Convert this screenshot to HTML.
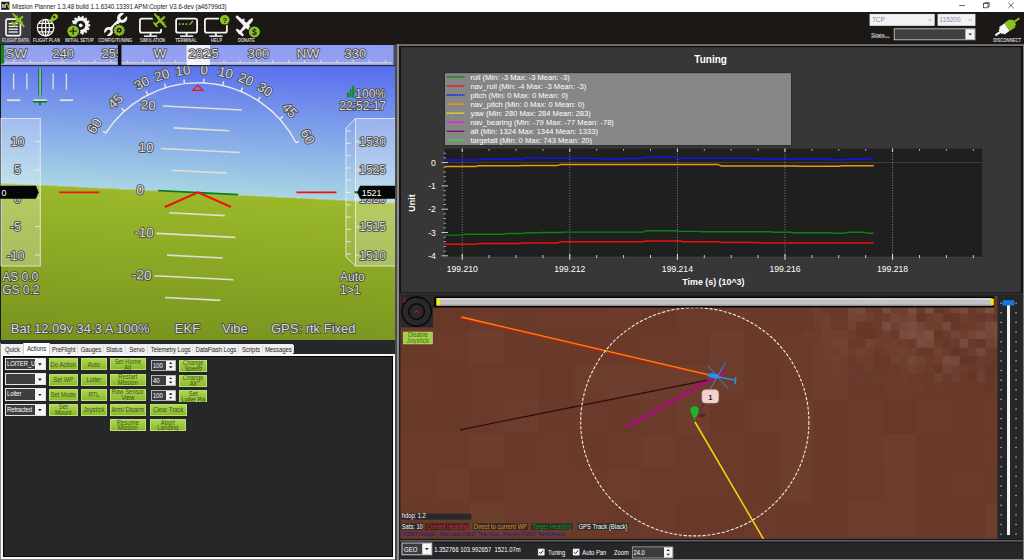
<!DOCTYPE html>
<html lang="en">
<head>
<meta charset="utf-8">
<title>Mission Planner</title>
<style>
*{box-sizing:border-box;margin:0;padding:0}
html,body{width:1024px;height:560px;overflow:hidden;background:#262729;font-family:"Liberation Sans",sans-serif;}
.abs{position:absolute}
#titlebar{left:0;top:0;width:1024px;height:12px;background:#fff;}
#titlebar .t{position:absolute;left:12px;top:1.9px;font-size:7.2px;line-height:9px;color:#151515;white-space:nowrap;display:inline-block;transform-origin:0 0;transform:scaleX(0.85)}
#toolbar{left:0;top:12px;width:1024px;height:32px;background:#1b1816;}
#tbsel{left:0;top:12px;width:31px;height:32px;background:#3b3b3d}
.tbl{position:absolute;top:37.5px;font-size:4.4px;line-height:5px;color:#e8e8e8;font-weight:bold;white-space:nowrap;text-align:center;letter-spacing:-0.1px;text-shadow:0 0 1px #99a}
#hud{left:0;top:44px;width:396px;height:296px;background:#111;overflow:hidden}
#left{left:0;top:340px;width:396px;height:220px;background:#262729}
#split{left:395.1px;top:44px;width:4px;height:516px;z-index:5;background:linear-gradient(90deg,#4a4a4c 0,#4a4a4c 2.4px,#8a8a8a 2.4px,#8a8a8a 4px)}
#chart{left:397px;top:44px;width:627px;height:250px;}
#split2{left:399.1px;top:293.6px;width:1.4px;height:267px;z-index:5;background:#1e2226}
#map{left:399px;top:294px;width:625px;height:266px;}

.tabt{font-size:6.7px;line-height:8px;color:#1c1c1c;text-align:center;white-space:nowrap;letter-spacing:-0.1px;transform:scaleX(0.9)}
.gbtn{background:linear-gradient(#abd753,#8cb92d);border:0.7px solid #bbe070;overflow:hidden;display:flex;align-items:center;justify-content:center;text-align:center;color:#3f5316;font-size:6.7px;line-height:6.2px;white-space:nowrap;letter-spacing:-0.05px}
.gbtn span{display:block;transform:scaleX(0.9)}
.gbtn.two{padding-top:0.9px}
.combo{background:#3d3d3f;border:0.8px solid #e4e4e4;color:#fff;font-size:6.6px;line-height:10.4px;overflow:hidden;white-space:nowrap}
.combo .ct{position:absolute;left:1.2px;top:0;letter-spacing:-0.1px;transform-origin:0 0;transform:scaleX(0.9)}
.combo i{position:absolute;right:0;top:0;width:9.4px;height:100%;background:#f6f6f6}
.combo i:after{content:"";position:absolute;left:2.8px;top:4.3px;width:3.8px;height:2.4px;background:#1a1a1a;clip-path:polygon(0 0,100% 0,50% 100%)}
.spin{background:#3d3d3f;border:0.7px solid #b8b8b8;color:#fff;font-size:6.6px;line-height:9.4px;overflow:hidden;white-space:nowrap}
.spin .ct{position:absolute;left:0.8px;top:0;letter-spacing:-0.1px;transform-origin:0 0;transform:scaleX(0.9)}
.spin i{position:absolute;right:0;top:0;width:8.6px;height:100%;background:#f4f4f4}
.spin i:before{content:"";position:absolute;left:2.5px;top:1.5px;width:3.6px;height:2.2px;background:#1a1a1a;clip-path:polygon(50% 0,100% 100%,0 100%)}
.spin i:after{content:"";position:absolute;left:2.5px;top:5.6px;width:3.6px;height:2.2px;background:#1a1a1a;clip-path:polygon(0 0,100% 0,50% 100%)}
</style>
</head>
<body>
<div id="titlebar" class="abs"><span class="t">Mission Planner 1.3.48 build 1.1.6340.13391 APM:Copter V3.6-dev (a46799d3)</span></div>
<div id="toolbar" class="abs"></div>
<div id="tbsel" class="abs"></div>
<!--TOOLBAR-ICONS-->
<svg class="abs" style="left:0;top:0" width="1024" height="45" viewBox="0 0 1024 45" font-family="'Liberation Sans',sans-serif">
<g stroke="#222" stroke-width="0.7" fill="none"><line x1="959.2" y1="5.5" x2="965" y2="5.5"/><rect x="983.6" y="3.6" width="4.4" height="4.2"/><path d="M984.8 3.6 V2.6 H989.2 V6.6 H988"/><path d="M1008.2 2.6 L1013.8 8.2 M1013.8 2.6 L1008.2 8.2"/></g>
<rect x="1.2" y="1.8" width="8.2" height="8" fill="#1a1a1a"/><text x="1.8" y="8" font-size="5.2" font-weight="bold" fill="#e8e8e8">M</text><path d="M5.8 3.2 C7.6 4 8.6 6 8.8 8.2" fill="none" stroke="#7cb82a" stroke-width="1.3"/>
<rect x="6" y="19.2" width="14.4" height="16.4" rx="1.6" fill="none" stroke="#f4f4f4" stroke-width="1.7"/>
<line x1="8.6" y1="23.6" x2="17.8" y2="23.6" stroke="#f4f4f4" stroke-width="1.3"/>
<line x1="8.6" y1="26.4" x2="17.8" y2="26.4" stroke="#f4f4f4" stroke-width="1.3"/>
<line x1="8.6" y1="29.2" x2="17.8" y2="29.2" stroke="#f4f4f4" stroke-width="1.3"/>
<line x1="8.6" y1="32" x2="17.8" y2="32" stroke="#f4f4f4" stroke-width="1.3"/>
<g transform="translate(18.4 20.2) rotate(50) scale(0.98)" fill="#8cc21e"><path d="M0 -6.4 C0.9 -6.4 1.15 -5 1.15 -3.6 L1.15 -1.5 L9.2 -0.9 L9.2 0.7 L1.15 1.3 L0.8 5.2 L3.2 5.6 L3.2 6.9 L0 7.4 L-3.2 6.9 L-3.2 5.6 L-0.8 5.2 L-1.15 1.3 L-9.2 0.7 L-9.2 -0.9 L-1.15 -1.5 L-1.15 -3.6 C-1.15 -5 -0.9 -6.4 0 -6.4 Z"/><rect x="-4.6" y="-2.4" width="1.3" height="3" rx="0.5"/><rect x="3.3" y="-2.4" width="1.3" height="3" rx="0.5"/></g>
<g fill="none" stroke="#f4f4f4" stroke-width="1.25"><circle cx="45.6" cy="27.6" r="8.3"/><ellipse cx="45.6" cy="27.6" rx="3.9" ry="8.3"/><line x1="45.6" y1="19.3" x2="45.6" y2="35.9"/><line x1="37.3" y1="27.6" x2="53.9" y2="27.6"/><path d="M38.6 23.3 H52.6 M38.6 31.9 H52.6"/></g>
<path d="M49.6 22.6 C50 19.5 51.2 17.4 52.4 15.8 A2.9 2.9 0 1 1 56.6 19.2 C55 20.4 52.6 21.4 49.6 22.6 Z" fill="#8cc21e"/><circle cx="54.3" cy="17" r="1.15" fill="#1b1816"/>
<polygon points="88.34 24.33 89.87 24.56 89.87 26.04 88.34 26.27 88.00 27.75 89.28 28.61 88.64 29.95 87.16 29.48 86.22 30.67 87.00 32.01 85.84 32.93 84.71 31.87 83.34 32.53 83.46 34.07 82.02 34.41 81.46 32.96 79.94 32.96 79.38 34.41 77.94 34.07 78.06 32.53 76.69 31.87 75.56 32.93 74.40 32.01 75.18 30.67 74.24 29.48 72.76 29.95 72.12 28.61 73.40 27.75 73.06 26.27 71.53 26.04 71.53 24.56 73.06 24.33 73.40 22.85 72.12 21.99 72.76 20.65 74.24 21.12 75.18 19.93 74.40 18.59 75.56 17.67 76.69 18.73 78.06 18.07 77.94 16.53 79.38 16.19 79.94 17.64 81.46 17.64 82.02 16.19 83.46 16.53 83.34 18.07 84.71 18.73 85.84 17.67 87.00 18.59 86.22 19.93 87.16 21.12 88.64 20.65 89.28 21.99 88.00 22.85" fill="#f4f4f4" stroke="#f4f4f4" stroke-width="0.7" stroke-linejoin="round"/>
<circle cx="80.7" cy="25.3" r="4.6" fill="#1b1816"/>
<circle cx="80.7" cy="25.3" r="1.9" fill="#f4f4f4"/>
<circle cx="73.2" cy="31.2" r="7.2" fill="#1b1816"/>
<circle cx="73.2" cy="31.2" r="5.8" fill="#8cc21e"/>
<path d="M69.6 31.2 H76.8 M73.2 27.6 V34.8" stroke="#1b2a10" stroke-width="1.3"/>
<g transform="translate(115.4 24.7) rotate(-45)"><rect x="-9" y="-1.75" width="18" height="3.5" fill="#f4f4f4"/><circle cx="9.6" cy="0" r="5.1" fill="#f4f4f4"/><circle cx="-9.6" cy="0" r="4.5" fill="#f4f4f4"/><rect x="9.4" y="-1.9" width="7" height="3.8" fill="#1b1816"/><circle cx="9.6" cy="0" r="1.9" fill="#1b1816"/><rect x="-16.4" y="-1.7" width="7" height="3.4" fill="#1b1816"/><circle cx="-9.4" cy="0" r="1.7" fill="#1b1816"/></g>
<circle cx="119.2" cy="30.3" r="6.6" fill="#1b1816"/>
<polygon points="123.65 29.64 124.58 29.79 124.58 30.81 123.65 30.96 123.38 31.96 124.11 32.55 123.60 33.43 122.73 33.10 122.00 33.83 122.33 34.70 121.45 35.21 120.86 34.48 119.86 34.75 119.71 35.68 118.69 35.68 118.54 34.75 117.54 34.48 116.95 35.21 116.07 34.70 116.40 33.83 115.67 33.10 114.80 33.43 114.29 32.55 115.02 31.96 114.75 30.96 113.82 30.81 113.82 29.79 114.75 29.64 115.02 28.64 114.29 28.05 114.80 27.17 115.67 27.50 116.40 26.77 116.07 25.90 116.95 25.39 117.54 26.12 118.54 25.85 118.69 24.92 119.71 24.92 119.86 25.85 120.86 26.12 121.45 25.39 122.33 25.90 122.00 26.77 122.73 27.50 123.60 27.17 124.11 28.05 123.38 28.64" fill="#8cc21e" stroke="#8cc21e" stroke-width="0.7" stroke-linejoin="round"/>
<circle cx="119.2" cy="30.3" r="2.5" fill="#1b1816"/>
<circle cx="119.2" cy="30.3" r="1.0" fill="#8cc21e"/>
<rect x="139.9" y="18.7" width="21.2" height="14" rx="2" fill="none" stroke="#f4f4f4" stroke-width="1.8"/><rect x="149.5" y="33.2" width="2" height="2.6" fill="#f4f4f4"/><rect x="143.9" y="35.4" width="13.2" height="1.5" fill="#f4f4f4"/>
<path d="M150.5 14 L168 14 L168 29 L158 29 Z" fill="#1b1816"/>
<g transform="translate(160.2 20.6) rotate(50) scale(1.0)" fill="#8cc21e"><path d="M0 -6.4 C0.9 -6.4 1.15 -5 1.15 -3.6 L1.15 -1.5 L9.2 -0.9 L9.2 0.7 L1.15 1.3 L0.8 5.2 L3.2 5.6 L3.2 6.9 L0 7.4 L-3.2 6.9 L-3.2 5.6 L-0.8 5.2 L-1.15 1.3 L-9.2 0.7 L-9.2 -0.9 L-1.15 -1.5 L-1.15 -3.6 C-1.15 -5 -0.9 -6.4 0 -6.4 Z"/><rect x="-4.6" y="-2.4" width="1.3" height="3" rx="0.5"/><rect x="3.3" y="-2.4" width="1.3" height="3" rx="0.5"/></g>
<rect x="176.1" y="18.7" width="21.00000000000001" height="14" rx="2" fill="none" stroke="#f4f4f4" stroke-width="1.8"/><rect x="185.6" y="33.2" width="2" height="2.6" fill="#f4f4f4"/><rect x="180.0" y="35.4" width="13.2" height="1.5" fill="#f4f4f4"/>
<g fill="#8cc21e"><rect x="178.8" y="23.2" width="1.7" height="1.7"/><rect x="182.2" y="23.2" width="1.7" height="1.7"/><rect x="185.6" y="23.2" width="1.7" height="1.7"/></g><line x1="189.6" y1="24.8" x2="192.8" y2="21" stroke="#8cc21e" stroke-width="1.3"/>
<rect x="204.9" y="18.7" width="22.00000000000001" height="14" rx="2" fill="none" stroke="#f4f4f4" stroke-width="1.8"/><rect x="214.9" y="33.2" width="2" height="2.6" fill="#f4f4f4"/><rect x="209.3" y="35.4" width="13.2" height="1.5" fill="#f4f4f4"/>
<circle cx="224.7" cy="19.8" r="6" fill="#1b1816"/>
<circle cx="224.7" cy="19.8" r="4.8" fill="#8cc21e"/><text x="224.7" y="22.5" font-size="7.6" font-weight="bold" text-anchor="middle" fill="#1b2a10">?</text>
<g transform="translate(246.2 25.6) rotate(43) scale(1.5)" fill="#f4f4f4"><path d="M0 -6.4 C0.9 -6.4 1.15 -5 1.15 -3.6 L1.15 -1.5 L9.2 -0.9 L9.2 0.7 L1.15 1.3 L0.8 5.2 L3.2 5.6 L3.2 6.9 L0 7.4 L-3.2 6.9 L-3.2 5.6 L-0.8 5.2 L-1.15 1.3 L-9.2 0.7 L-9.2 -0.9 L-1.15 -1.5 L-1.15 -3.6 C-1.15 -5 -0.9 -6.4 0 -6.4 Z"/><rect x="-4.6" y="-2.4" width="1.3" height="3" rx="0.5"/><rect x="3.3" y="-2.4" width="1.3" height="3" rx="0.5"/></g>
<circle cx="254.4" cy="31.9" r="6.6" fill="#1b1816"/>
<circle cx="254.4" cy="31.9" r="5.5" fill="#8cc21e"/><text x="254.4" y="35" font-size="8.4" font-weight="bold" text-anchor="middle" fill="#101a40">$</text>
<text x="15.5" y="41.7" textLength="27" lengthAdjust="spacingAndGlyphs" font-size="4.7" font-weight="bold" fill="#cfcfd8" text-anchor="middle">FLIGHT DATA</text>
<text x="46.5" y="41.7" textLength="27" lengthAdjust="spacingAndGlyphs" font-size="4.7" font-weight="bold" fill="#cfcfd8" text-anchor="middle">FLIGHT PLAN</text>
<text x="79.3" y="41.7" textLength="28.6" lengthAdjust="spacingAndGlyphs" font-size="4.7" font-weight="bold" fill="#cfcfd8" text-anchor="middle">INITIAL SETUP</text>
<text x="115.3" y="41.7" textLength="34" lengthAdjust="spacingAndGlyphs" font-size="4.7" font-weight="bold" fill="#cfcfd8" text-anchor="middle">CONFIG/TUNING</text>
<text x="152.5" y="41.7" textLength="25" lengthAdjust="spacingAndGlyphs" font-size="4.7" font-weight="bold" fill="#cfcfd8" text-anchor="middle">SIMULATION</text>
<text x="186" y="41.7" textLength="21.5" lengthAdjust="spacingAndGlyphs" font-size="4.7" font-weight="bold" fill="#cfcfd8" text-anchor="middle">TERMINAL</text>
<text x="216.5" y="41.7" textLength="11" lengthAdjust="spacingAndGlyphs" font-size="4.7" font-weight="bold" fill="#cfcfd8" text-anchor="middle">HELP</text>
<text x="246.4" y="41.7" textLength="16.8" lengthAdjust="spacingAndGlyphs" font-size="4.7" font-weight="bold" fill="#cfcfd8" text-anchor="middle">DONATE</text>
<text x="1007.2" y="41.7" textLength="28" lengthAdjust="spacingAndGlyphs" font-size="4.7" font-weight="bold" fill="#cfcfd8" text-anchor="middle">DISCONNECT</text>
<rect x="870" y="14.3" width="64.2" height="11" fill="#f1f1f6" stroke="#fafafa" stroke-width="0.8"/><text x="872.2" y="22.3" font-size="6.4" fill="#8a8a92">TCP</text><path d="M928.4 19 L930 20.8 L931.6 19" fill="none" stroke="#888" stroke-width="0.6"/>
<rect x="938" y="14.3" width="37" height="11" fill="#f1f1f6" stroke="#fafafa" stroke-width="0.8"/><text x="939.6" y="22.3" font-size="6.4" fill="#8a8a92">115200</text><path d="M968.6 19 L970.2 20.8 L971.8 19" fill="none" stroke="#888" stroke-width="0.6"/>
<text x="871" y="36.6" font-size="6" fill="#f0f0f0">Stats...</text><line x1="871.2" y1="37.6" x2="890" y2="37.6" stroke="#e8e8e8" stroke-width="0.5"/>
<rect x="894.2" y="28.8" width="80.8" height="11" fill="#404042" stroke="#d8d8d8" stroke-width="0.8"/><rect x="965.4" y="29.2" width="9.2" height="10.2" fill="#f4f4f4"/><path d="M968.4 33.4 H972 L970.2 35.6 Z" fill="#222"/>
<g transform="translate(995.4 35.4) rotate(-35.5)"><rect x="0" y="-1.1" width="7" height="2.2" fill="#f4f4f4"/><path d="M5.8 -2.8 H7.6 V-4.5 H14.4 V4.5 H7.6 V2.8 H5.8 Z" fill="#f4f4f4"/><path d="M14.3 -4.9 H20.6 L22.2 -3.2 H23.4 V3.2 H22.2 L20.6 4.9 H14.3 Z" fill="#8cc21e"/><rect x="23" y="-0.95" width="6.5" height="1.9" fill="#8cc21e"/></g>
</svg>
<!--/TOOLBAR-ICONS-->
<div id="hud" class="abs">
<!--HUD-->
<svg class="abs" style="left:0;top:0" width="396" height="296" viewBox="0 44 396 296" font-family="'Liberation Sans',sans-serif">
<defs>
<linearGradient id="sky" x1="0" y1="0" x2="0" y2="1"><stop offset="0" stop-color="#3642f3"/><stop offset="1" stop-color="#a8d6e4"/></linearGradient>
<linearGradient id="gnd" x1="0" y1="0" x2="0" y2="1"><stop offset="0" stop-color="#9bb92a"/><stop offset="1" stop-color="#66811a"/></linearGradient>
<clipPath id="c255"><rect x="90" y="45" width="28.5" height="20"/></clipPath>
<clipPath id="hudclip"><rect x="1" y="45" width="394.5" height="295"/></clipPath>
</defs>
<rect x="0" y="44" width="396" height="296" fill="#1a1a1a"/>
<g clip-path="url(#hudclip)">
<g transform="rotate(2.9 198.1 192.9)">
<rect x="-100" y="2.9000000000000057" width="600" height="190" fill="url(#sky)"/>
<rect x="-100" y="192.9" width="600" height="230" fill="url(#gnd)"/>
<line x1="-100" y1="192.9" x2="500" y2="192.9" stroke="#d8e0d8" stroke-width="0.9" opacity="0.75"/>
<line x1="170.3" y1="299.1" x2="225.9" y2="299.1" stroke="#deded4" stroke-width="1.6"/>
<line x1="158.5" y1="277.9" x2="237.7" y2="277.9" stroke="#deded4" stroke-width="1.6"/>
<text x="136.3" y="282.3" font-size="13.5" fill="#dadada" stroke="#484848" stroke-width="1.7" paint-order="stroke" stroke-linejoin="round">-20</text>
<line x1="170.3" y1="256.6" x2="225.9" y2="256.6" stroke="#deded4" stroke-width="1.6"/>
<line x1="158.5" y1="235.4" x2="237.7" y2="235.4" stroke="#deded4" stroke-width="1.6"/>
<text x="136.3" y="239.8" font-size="13.5" fill="#dadada" stroke="#484848" stroke-width="1.7" paint-order="stroke" stroke-linejoin="round">-10</text>
<line x1="170.3" y1="214.2" x2="225.9" y2="214.2" stroke="#deded4" stroke-width="1.6"/>
<line x1="170.3" y1="171.7" x2="225.9" y2="171.7" stroke="#deded4" stroke-width="1.6"/>
<line x1="158.5" y1="150.4" x2="237.7" y2="150.4" stroke="#deded4" stroke-width="1.6"/>
<text x="136.3" y="154.8" font-size="13.5" fill="#dadada" stroke="#484848" stroke-width="1.7" paint-order="stroke" stroke-linejoin="round">10</text>
<line x1="170.3" y1="129.2" x2="225.9" y2="129.2" stroke="#deded4" stroke-width="1.6"/>
<line x1="158.5" y1="107.9" x2="237.7" y2="107.9" stroke="#deded4" stroke-width="1.6"/>
<text x="136.3" y="112.3" font-size="13.5" fill="#dadada" stroke="#484848" stroke-width="1.7" paint-order="stroke" stroke-linejoin="round">20</text>
<text x="136.3" y="197.3" font-size="13.5" fill="#dadada" stroke="#484848" stroke-width="1.7" paint-order="stroke" stroke-linejoin="round">0</text>
<line x1="158.1" y1="192.6" x2="238.1" y2="192.6" stroke="#0a7a1a" stroke-width="1.8"/>
<path d="M102.84 137.90 A110 110 0 0 1 293.36 137.90" fill="none" stroke="#ecece6" stroke-width="1.4"/>
<line x1="102.84" y1="137.90" x2="99.98" y2="136.25" stroke="#ecece6" stroke-width="1.4"/>
<text transform="translate(95.30 133.55) rotate(-60)" text-anchor="middle" font-size="13.5" fill="#dadada" stroke="#484848" stroke-width="1.7" paint-order="stroke" stroke-linejoin="round">60</text>
<line x1="120.32" y1="115.12" x2="117.28" y2="112.08" stroke="#ecece6" stroke-width="1.4"/>
<text transform="translate(114.17 108.97) rotate(-45)" text-anchor="middle" font-size="13.5" fill="#dadada" stroke="#484848" stroke-width="1.7" paint-order="stroke" stroke-linejoin="round">45</text>
<line x1="143.10" y1="97.64" x2="140.95" y2="93.91" stroke="#ecece6" stroke-width="1.4"/>
<text transform="translate(138.75 90.10) rotate(-30)" text-anchor="middle" font-size="13.5" fill="#dadada" stroke="#484848" stroke-width="1.7" paint-order="stroke" stroke-linejoin="round">30</text>
<line x1="160.48" y1="89.53" x2="159.01" y2="85.49" stroke="#ecece6" stroke-width="1.4"/>
<text transform="translate(157.50 81.36) rotate(-20)" text-anchor="middle" font-size="13.5" fill="#dadada" stroke="#484848" stroke-width="1.7" paint-order="stroke" stroke-linejoin="round">20</text>
<line x1="179.00" y1="84.57" x2="178.25" y2="80.34" stroke="#ecece6" stroke-width="1.4"/>
<text transform="translate(177.49 76.00) rotate(-10)" text-anchor="middle" font-size="13.5" fill="#dadada" stroke="#484848" stroke-width="1.7" paint-order="stroke" stroke-linejoin="round">10</text>
<line x1="198.10" y1="82.90" x2="198.10" y2="78.60" stroke="#ecece6" stroke-width="1.4"/>
<text transform="translate(198.10 74.20) rotate(0)" text-anchor="middle" font-size="13.5" fill="#dadada" stroke="#484848" stroke-width="1.7" paint-order="stroke" stroke-linejoin="round">0</text>
<line x1="217.20" y1="84.57" x2="217.95" y2="80.34" stroke="#ecece6" stroke-width="1.4"/>
<text transform="translate(218.71 76.00) rotate(10)" text-anchor="middle" font-size="13.5" fill="#dadada" stroke="#484848" stroke-width="1.7" paint-order="stroke" stroke-linejoin="round">10</text>
<line x1="235.72" y1="89.53" x2="237.19" y2="85.49" stroke="#ecece6" stroke-width="1.4"/>
<text transform="translate(238.70 81.36) rotate(20)" text-anchor="middle" font-size="13.5" fill="#dadada" stroke="#484848" stroke-width="1.7" paint-order="stroke" stroke-linejoin="round">20</text>
<line x1="253.10" y1="97.64" x2="255.25" y2="93.91" stroke="#ecece6" stroke-width="1.4"/>
<text transform="translate(257.45 90.10) rotate(30)" text-anchor="middle" font-size="13.5" fill="#dadada" stroke="#484848" stroke-width="1.7" paint-order="stroke" stroke-linejoin="round">30</text>
<line x1="275.88" y1="115.12" x2="278.92" y2="112.08" stroke="#ecece6" stroke-width="1.4"/>
<text transform="translate(282.03 108.97) rotate(45)" text-anchor="middle" font-size="13.5" fill="#dadada" stroke="#484848" stroke-width="1.7" paint-order="stroke" stroke-linejoin="round">45</text>
<line x1="293.36" y1="137.90" x2="296.22" y2="136.25" stroke="#ecece6" stroke-width="1.4"/>
<text transform="translate(300.90 133.55) rotate(60)" text-anchor="middle" font-size="13.5" fill="#dadada" stroke="#484848" stroke-width="1.7" paint-order="stroke" stroke-linejoin="round">60</text>
</g>
</g>
<rect x="1" y="45" width="394.5" height="20" fill="#a9b6f3" opacity="0.72"/>
<rect x="0" y="65" width="396" height="1.2" fill="#2a2a33"/>
<line x1="4" y1="62.9" x2="392" y2="62.9" stroke="#d6d6d0" stroke-width="1.4"/>
<line x1="14.1" y1="60" x2="14.1" y2="63" stroke="#d6d6d0" stroke-width="1.2"/>
<line x1="30.2" y1="60" x2="30.2" y2="63" stroke="#d6d6d0" stroke-width="1.2"/>
<line x1="46.4" y1="60" x2="46.4" y2="63" stroke="#d6d6d0" stroke-width="1.2"/>
<line x1="62.5" y1="60" x2="62.5" y2="63" stroke="#d6d6d0" stroke-width="1.2"/>
<line x1="78.7" y1="60" x2="78.7" y2="63" stroke="#d6d6d0" stroke-width="1.2"/>
<line x1="94.8" y1="60" x2="94.8" y2="63" stroke="#d6d6d0" stroke-width="1.2"/>
<line x1="111.0" y1="60" x2="111.0" y2="63" stroke="#d6d6d0" stroke-width="1.2"/>
<line x1="127.1" y1="60" x2="127.1" y2="63" stroke="#d6d6d0" stroke-width="1.2"/>
<line x1="143.3" y1="60" x2="143.3" y2="63" stroke="#d6d6d0" stroke-width="1.2"/>
<line x1="159.4" y1="60" x2="159.4" y2="63" stroke="#d6d6d0" stroke-width="1.2"/>
<line x1="175.6" y1="60" x2="175.6" y2="63" stroke="#d6d6d0" stroke-width="1.2"/>
<line x1="191.7" y1="60" x2="191.7" y2="63" stroke="#d6d6d0" stroke-width="1.2"/>
<line x1="207.9" y1="60" x2="207.9" y2="63" stroke="#d6d6d0" stroke-width="1.2"/>
<line x1="224.0" y1="60" x2="224.0" y2="63" stroke="#d6d6d0" stroke-width="1.2"/>
<line x1="240.2" y1="60" x2="240.2" y2="63" stroke="#d6d6d0" stroke-width="1.2"/>
<line x1="256.3" y1="60" x2="256.3" y2="63" stroke="#d6d6d0" stroke-width="1.2"/>
<line x1="272.5" y1="60" x2="272.5" y2="63" stroke="#d6d6d0" stroke-width="1.2"/>
<line x1="288.6" y1="60" x2="288.6" y2="63" stroke="#d6d6d0" stroke-width="1.2"/>
<line x1="304.8" y1="60" x2="304.8" y2="63" stroke="#d6d6d0" stroke-width="1.2"/>
<line x1="320.9" y1="60" x2="320.9" y2="63" stroke="#d6d6d0" stroke-width="1.2"/>
<line x1="337.0" y1="60" x2="337.0" y2="63" stroke="#d6d6d0" stroke-width="1.2"/>
<line x1="353.2" y1="60" x2="353.2" y2="63" stroke="#d6d6d0" stroke-width="1.2"/>
<line x1="369.3" y1="60" x2="369.3" y2="63" stroke="#d6d6d0" stroke-width="1.2"/>
<line x1="385.5" y1="60" x2="385.5" y2="63" stroke="#d6d6d0" stroke-width="1.2"/>
<rect x="1" y="45" width="3.2" height="18.5" fill="#0c8a16"/>
<text x="197.2" y="58" font-size="12.8" fill="#dadada" stroke="#454545" stroke-width="1.7" paint-order="stroke" stroke-linejoin="round">285</text>
<rect x="186.6" y="45" width="23.4" height="20" fill="#ffffff" opacity="0.86"/>
<text x="188.6" y="58" font-size="12.8" fill="#dadada" stroke="#454545" stroke-width="1.7" paint-order="stroke" stroke-linejoin="round">282</text>
<text x="5.0" y="58" font-size="13.7" fill="#dadada" stroke="#454545" stroke-width="1.7" paint-order="stroke" stroke-linejoin="round">SW</text>
<text x="52.6" y="58" font-size="12.8" fill="#dadada" stroke="#454545" stroke-width="1.7" paint-order="stroke" stroke-linejoin="round">240</text>
<text x="101.6" y="58" font-size="12.8" clip-path="url(#c255)" fill="#dadada" stroke="#454545" stroke-width="1.7" paint-order="stroke" stroke-linejoin="round">255</text>
<text x="153.6" y="58" font-size="13.7" fill="#dadada" stroke="#454545" stroke-width="1.7" paint-order="stroke" stroke-linejoin="round">W</text>
<text x="247.8" y="58" font-size="12.8" fill="#dadada" stroke="#454545" stroke-width="1.7" paint-order="stroke" stroke-linejoin="round">300</text>
<text x="296.6" y="58" font-size="13.7" fill="#dadada" stroke="#454545" stroke-width="1.7" paint-order="stroke" stroke-linejoin="round">NW</text>
<text x="344.8" y="58" font-size="12.8" fill="#dadada" stroke="#454545" stroke-width="1.7" paint-order="stroke" stroke-linejoin="round">330</text>
<rect x="117.8" y="45" width="3.6" height="20.5" fill="#0c0c0c"/>
<rect x="393.5" y="45" width="2" height="20.5" fill="#333" opacity="0.8"/>
<path d="M197.9 85.2 L192.6 90.4 L203.2 90.4 Z" fill="none" stroke="#f01818" stroke-width="1.2"/>
<path d="M165 207 L198 192.3 L231 207" fill="none" stroke="#f01010" stroke-width="2"/>
<line x1="59.3" y1="192.3" x2="99.2" y2="192.3" stroke="#f01010" stroke-width="1.8"/>
<line x1="296.5" y1="192.3" x2="336.5" y2="192.3" stroke="#f01010" stroke-width="1.8"/>
<line x1="13.6" y1="73.6" x2="13.6" y2="89.6" stroke="#e4e0d0" stroke-width="1.3"/>
<line x1="26.9" y1="73.6" x2="26.9" y2="89.6" stroke="#e4e0d0" stroke-width="1.3"/>
<line x1="53.1" y1="73.6" x2="53.1" y2="89.6" stroke="#e4e0d0" stroke-width="1.3"/>
<line x1="66.4" y1="73.6" x2="66.4" y2="89.6" stroke="#e4e0d0" stroke-width="1.3"/>
<line x1="38.9" y1="68" x2="38.9" y2="95" stroke="#0a7a14" stroke-width="1.2"/><line x1="41.2" y1="68" x2="41.2" y2="95" stroke="#0a7a14" stroke-width="1.2"/><line x1="40.05" y1="68" x2="40.05" y2="95" stroke="#d8e8d0" stroke-width="0.9"/>
<line x1="7" y1="100.2" x2="20.3" y2="100.2" stroke="#ece6d4" stroke-width="1.7"/>
<line x1="33.3" y1="100.2" x2="46.8" y2="100.2" stroke="#ece6d4" stroke-width="1.7"/>
<line x1="60" y1="100.2" x2="73" y2="100.2" stroke="#ece6d4" stroke-width="1.7"/>
<line x1="33" y1="101.7" x2="47" y2="101.7" stroke="#0a7a14" stroke-width="1.5"/><line x1="40" y1="101" x2="40" y2="105.3" stroke="#0a7a14" stroke-width="1.8"/>
<rect x="1" y="118.5" width="39.3" height="147.5" fill="#ffffff" fill-opacity="0.27" stroke="#f0f0f0" stroke-opacity="0.8" stroke-width="1"/>
<line x1="35" y1="141.4" x2="40" y2="141.4" stroke="#eee" stroke-opacity="0.8" stroke-width="1"/>
<text x="17.5" y="145.9" text-anchor="middle" font-size="12.5" fill="#dadada" stroke="#454545" stroke-width="1.7" paint-order="stroke" stroke-linejoin="round">10</text>
<line x1="35" y1="169.8" x2="40" y2="169.8" stroke="#eee" stroke-opacity="0.8" stroke-width="1"/>
<text x="17.5" y="174.3" text-anchor="middle" font-size="12.5" fill="#dadada" stroke="#454545" stroke-width="1.7" paint-order="stroke" stroke-linejoin="round">5</text>
<line x1="35" y1="198.2" x2="40" y2="198.2" stroke="#eee" stroke-opacity="0.8" stroke-width="1"/>
<text x="17.5" y="202.7" text-anchor="middle" font-size="12.5" fill="#dadada" stroke="#454545" stroke-width="1.7" paint-order="stroke" stroke-linejoin="round">0</text>
<line x1="35" y1="226.6" x2="40" y2="226.6" stroke="#eee" stroke-opacity="0.8" stroke-width="1"/>
<text x="15.5" y="231.1" text-anchor="middle" font-size="12.5" fill="#dadada" stroke="#454545" stroke-width="1.7" paint-order="stroke" stroke-linejoin="round">-5</text>
<line x1="35" y1="255" x2="40" y2="255" stroke="#eee" stroke-opacity="0.8" stroke-width="1"/>
<text x="15.5" y="259.5" text-anchor="middle" font-size="12.5" fill="#dadada" stroke="#454545" stroke-width="1.7" paint-order="stroke" stroke-linejoin="round">-10</text>
<path d="M0 185.8 H36 L38.6 192.3 L36 198.8 H0 Z" fill="#050505"/>
<text x="1.6" y="195.5" font-size="8.8" fill="#fff">0</text>
<rect x="355.5" y="118.5" width="40" height="147.5" fill="#ffffff" fill-opacity="0.27" stroke="#f0f0f0" stroke-opacity="0.8" stroke-width="1"/>
<path d="M355.5 118.5 L346 128 V257 L355.5 266" fill="#ffffff" fill-opacity="0.12" stroke="#f0f0f0" stroke-opacity="0.85" stroke-width="1"/>
<line x1="346" y1="131.0" x2="351" y2="131.0" stroke="#f0f0f0" stroke-opacity="0.85" stroke-width="1"/>
<line x1="346" y1="143.3" x2="351" y2="143.3" stroke="#f0f0f0" stroke-opacity="0.85" stroke-width="1"/>
<line x1="346" y1="155.6" x2="351" y2="155.6" stroke="#f0f0f0" stroke-opacity="0.85" stroke-width="1"/>
<line x1="346" y1="167.9" x2="351" y2="167.9" stroke="#f0f0f0" stroke-opacity="0.85" stroke-width="1"/>
<line x1="346" y1="180.2" x2="351" y2="180.2" stroke="#f0f0f0" stroke-opacity="0.85" stroke-width="1"/>
<line x1="346" y1="192.5" x2="351" y2="192.5" stroke="#f0f0f0" stroke-opacity="0.85" stroke-width="1"/>
<line x1="346" y1="204.8" x2="351" y2="204.8" stroke="#f0f0f0" stroke-opacity="0.85" stroke-width="1"/>
<line x1="346" y1="217.1" x2="351" y2="217.1" stroke="#f0f0f0" stroke-opacity="0.85" stroke-width="1"/>
<line x1="346" y1="229.4" x2="351" y2="229.4" stroke="#f0f0f0" stroke-opacity="0.85" stroke-width="1"/>
<line x1="346" y1="241.7" x2="351" y2="241.7" stroke="#f0f0f0" stroke-opacity="0.85" stroke-width="1"/>
<line x1="346" y1="254.0" x2="351" y2="254.0" stroke="#f0f0f0" stroke-opacity="0.85" stroke-width="1"/>
<line x1="355.5" y1="141.6" x2="359" y2="141.6" stroke="#eee" stroke-opacity="0.8" stroke-width="1"/>
<text x="372.6" y="146.0" text-anchor="middle" font-size="12" fill="#dadada" stroke="#454545" stroke-width="1.7" paint-order="stroke" stroke-linejoin="round">1530</text>
<line x1="355.5" y1="169.8" x2="359" y2="169.8" stroke="#eee" stroke-opacity="0.8" stroke-width="1"/>
<text x="372.6" y="174.20000000000002" text-anchor="middle" font-size="12" fill="#dadada" stroke="#454545" stroke-width="1.7" paint-order="stroke" stroke-linejoin="round">1525</text>
<line x1="355.5" y1="198.2" x2="359" y2="198.2" stroke="#eee" stroke-opacity="0.8" stroke-width="1"/>
<text x="372.6" y="202.6" text-anchor="middle" font-size="12" fill="#dadada" stroke="#454545" stroke-width="1.7" paint-order="stroke" stroke-linejoin="round">1520</text>
<line x1="355.5" y1="226.8" x2="359" y2="226.8" stroke="#eee" stroke-opacity="0.8" stroke-width="1"/>
<text x="372.6" y="231.20000000000002" text-anchor="middle" font-size="12" fill="#dadada" stroke="#454545" stroke-width="1.7" paint-order="stroke" stroke-linejoin="round">1515</text>
<line x1="355.5" y1="255.2" x2="359" y2="255.2" stroke="#eee" stroke-opacity="0.8" stroke-width="1"/>
<text x="372.6" y="259.59999999999997" text-anchor="middle" font-size="12" fill="#dadada" stroke="#454545" stroke-width="1.7" paint-order="stroke" stroke-linejoin="round">1510</text>
<line x1="354.5" y1="192.3" x2="358.5" y2="192.3" stroke="#0a8a14" stroke-width="2.2"/>
<path d="M396 185.8 H360 L357.3 192.3 L360 198.8 H396 Z" fill="#050505"/>
<text x="361.8" y="195.5" font-size="8.8" fill="#fff">1521</text>
<rect x="346.8" y="92.6" width="2" height="4.9" fill="#0c8a16"/><rect x="349.5" y="89.4" width="2" height="8.1" fill="#0c8a16"/><rect x="352.2" y="85.8" width="2" height="11.7" fill="#0c8a16"/>
<text x="386" y="98.2" text-anchor="end" font-size="12" fill="#dadada" stroke="#454545" stroke-width="1.7" paint-order="stroke" stroke-linejoin="round">100%</text>
<text x="386" y="109.6" text-anchor="end" font-size="12" fill="#dadada" stroke="#454545" stroke-width="1.7" paint-order="stroke" stroke-linejoin="round">22:52:17</text>
<text x="2.2" y="281" font-size="12" fill="#dadada" stroke="#454545" stroke-width="1.7" paint-order="stroke" stroke-linejoin="round">AS 0.0</text>
<text x="2.2" y="294.3" font-size="12" fill="#dadada" stroke="#454545" stroke-width="1.7" paint-order="stroke" stroke-linejoin="round">GS 0.2</text>
<text x="340" y="281" font-size="12" fill="#dadada" stroke="#454545" stroke-width="1.7" paint-order="stroke" stroke-linejoin="round">Auto</text>
<text x="340" y="294.3" font-size="12" fill="#dadada" stroke="#454545" stroke-width="1.7" paint-order="stroke" stroke-linejoin="round">1&gt;1</text>
<text x="10.8" y="333" font-size="13" fill="#dadada" stroke="#454545" stroke-width="1.7" paint-order="stroke" stroke-linejoin="round">Bat 12.09v 34.3 A 100%</text>
<text x="174.8" y="333" font-size="13" fill="#dadada" stroke="#454545" stroke-width="1.7" paint-order="stroke" stroke-linejoin="round">EKF</text>
<text x="222" y="333" font-size="13" fill="#dadada" stroke="#454545" stroke-width="1.7" paint-order="stroke" stroke-linejoin="round">Vibe</text>
<text x="271" y="333" font-size="13" fill="#dadada" stroke="#454545" stroke-width="1.7" paint-order="stroke" stroke-linejoin="round">GPS: rtk Fixed</text>
</svg>
<!--/HUD-->
</div>
<div id="left" class="abs">
<!--LEFT-->
<div class="abs " style="left:2.0px;top:4.2px;width:291.0px;height:9.6px;background:#efefef;"></div>
<div class="abs " style="left:22.6px;top:4.6px;width:0.7px;height:8.8px;background:#dadada;"></div>
<div class="abs tabt" style="left:2.0px;top:5.8px;width:21.0px;">Quick</div>
<div class="abs " style="left:23.0px;top:3.0px;width:27.0px;height:11.6px;background:#ffffff;border-left:0.6px solid #d0d0d0;border-right:0.6px solid #d0d0d0;"></div>
<div class="abs tabt" style="left:23.0px;top:4.8px;width:27.0px;">Actions</div>
<div class="abs " style="left:77.1px;top:4.6px;width:0.7px;height:8.8px;background:#dadada;"></div>
<div class="abs tabt" style="left:50.0px;top:5.8px;width:27.5px;">PreFlight</div>
<div class="abs " style="left:103.0px;top:4.6px;width:0.7px;height:8.8px;background:#dadada;"></div>
<div class="abs tabt" style="left:77.5px;top:5.8px;width:25.9px;">Gauges</div>
<div class="abs " style="left:125.3px;top:4.6px;width:0.7px;height:8.8px;background:#dadada;"></div>
<div class="abs tabt" style="left:103.4px;top:5.8px;width:22.3px;">Status</div>
<div class="abs " style="left:147.3px;top:4.6px;width:0.7px;height:8.8px;background:#dadada;"></div>
<div class="abs tabt" style="left:125.7px;top:5.8px;width:22.0px;">Servo</div>
<div class="abs " style="left:192.4px;top:4.6px;width:0.7px;height:8.8px;background:#dadada;"></div>
<div class="abs tabt" style="left:147.7px;top:5.8px;width:45.1px;">Telemetry Logs</div>
<div class="abs " style="left:238.1px;top:4.6px;width:0.7px;height:8.8px;background:#dadada;"></div>
<div class="abs tabt" style="left:192.8px;top:5.8px;width:45.7px;">DataFlash Logs</div>
<div class="abs " style="left:262.1px;top:4.6px;width:0.7px;height:8.8px;background:#dadada;"></div>
<div class="abs tabt" style="left:238.5px;top:5.8px;width:24.0px;">Scripts</div>
<div class="abs " style="left:292.6px;top:4.6px;width:0.7px;height:8.8px;background:#dadada;"></div>
<div class="abs tabt" style="left:262.5px;top:5.8px;width:30.5px;">Messages</div>
<div class="abs " style="left:0.8px;top:13.7px;width:394.3px;height:205.0px;border:2px solid #f6f6f6;box-shadow:inset 0 0 0 1.1px #050505;"></div>
<div class="abs " style="left:0.0px;top:3.0px;width:0.8px;height:217.0px;background:#909090;"></div>
<div class="abs " style="left:0.8px;top:3.6px;width:2.0px;height:12.0px;background:#f6f6f6;"></div>
<div class="abs combo" style="left:5.0px;top:18.0px;width:40.6px;height:12.2px;"><span class="ct">LOITER_U</span><i></i></div>
<div class="abs combo" style="left:5.0px;top:33.2px;width:40.6px;height:12.2px;"><span class="ct"></span><i></i></div>
<div class="abs combo" style="left:5.0px;top:48.4px;width:40.6px;height:12.2px;"><span class="ct">Loiter</span><i></i></div>
<div class="abs combo" style="left:5.0px;top:63.6px;width:40.6px;height:12.2px;"><span class="ct">Retracted</span><i></i></div>
<div class="abs gbtn" style="left:48.7px;top:18.4px;width:29.0px;height:12.0px;"></div>
<div class="abs gbtn" style="left:48.7px;top:33.6px;width:29.0px;height:12.0px;"></div>
<div class="abs gbtn" style="left:48.7px;top:48.8px;width:29.0px;height:12.0px;"></div>
<div class="abs gbtn" style="left:48.7px;top:64.0px;width:29.0px;height:12.0px;"></div>
<div class="abs gbtn" style="left:81.1px;top:18.4px;width:25.6px;height:12.0px;"></div>
<div class="abs gbtn" style="left:81.1px;top:33.6px;width:25.6px;height:12.0px;"></div>
<div class="abs gbtn" style="left:81.1px;top:48.8px;width:25.6px;height:12.0px;"></div>
<div class="abs gbtn" style="left:81.1px;top:64.0px;width:25.6px;height:12.0px;"></div>
<div class="abs gbtn" style="left:109.6px;top:18.4px;width:36.4px;height:12.0px;"></div>
<div class="abs gbtn" style="left:109.6px;top:33.6px;width:36.4px;height:12.0px;"></div>
<div class="abs gbtn" style="left:109.6px;top:48.8px;width:36.4px;height:12.0px;"></div>
<div class="abs gbtn" style="left:109.6px;top:64.0px;width:36.4px;height:12.0px;"></div>
<div class="abs gbtn" style="left:109.6px;top:79.2px;width:36.4px;height:12.0px;"></div>
<div class="abs spin" style="left:151.0px;top:19.6px;width:25.0px;height:11.0px;"><span class="ct">100</span><i></i></div>
<div class="abs spin" style="left:151.0px;top:34.8px;width:25.0px;height:11.0px;"><span class="ct">40</span><i></i></div>
<div class="abs spin" style="left:151.0px;top:50.0px;width:25.0px;height:11.0px;"><span class="ct">100</span><i></i></div>
<div class="abs gbtn" style="left:179.4px;top:19.9px;width:27.6px;height:12.0px;"></div>
<div class="abs gbtn" style="left:179.4px;top:35.1px;width:27.6px;height:12.0px;"></div>
<div class="abs gbtn" style="left:179.4px;top:50.3px;width:27.6px;height:12.0px;"></div>
<div class="abs gbtn" style="left:149.5px;top:64.0px;width:37.7px;height:12.0px;"></div>
<div class="abs gbtn" style="left:149.5px;top:79.2px;width:36.5px;height:12.0px;"></div>
<svg class="abs" style="left:0;top:0" width="396" height="220" viewBox="0 340 396 220" font-family="'Liberation Sans',sans-serif" font-size="6.5" fill="#3f5316" text-anchor="middle"><defs><clipPath id="bc0"><rect x="49.0" y="358.7" width="28.4" height="11.4"/></clipPath><clipPath id="bc1"><rect x="49.0" y="373.9" width="28.4" height="11.4"/></clipPath><clipPath id="bc2"><rect x="49.0" y="389.1" width="28.4" height="11.4"/></clipPath><clipPath id="bc3"><rect x="49.0" y="404.3" width="28.4" height="11.4"/></clipPath><clipPath id="bc4"><rect x="81.4" y="358.7" width="25.0" height="11.4"/></clipPath><clipPath id="bc5"><rect x="81.4" y="373.9" width="25.0" height="11.4"/></clipPath><clipPath id="bc6"><rect x="81.4" y="389.1" width="25.0" height="11.4"/></clipPath><clipPath id="bc7"><rect x="81.4" y="404.3" width="25.0" height="11.4"/></clipPath><clipPath id="bc8"><rect x="109.9" y="358.7" width="35.8" height="11.4"/></clipPath><clipPath id="bc9"><rect x="109.9" y="373.9" width="35.8" height="11.4"/></clipPath><clipPath id="bc10"><rect x="109.9" y="389.1" width="35.8" height="11.4"/></clipPath><clipPath id="bc11"><rect x="109.9" y="404.3" width="35.8" height="11.4"/></clipPath><clipPath id="bc12"><rect x="109.9" y="419.5" width="35.8" height="11.4"/></clipPath><clipPath id="bc13"><rect x="179.7" y="360.2" width="27.0" height="11.4"/></clipPath><clipPath id="bc14"><rect x="179.7" y="375.4" width="27.0" height="11.4"/></clipPath><clipPath id="bc15"><rect x="179.7" y="390.6" width="27.0" height="11.4"/></clipPath><clipPath id="bc16"><rect x="149.8" y="404.3" width="37.1" height="11.4"/></clipPath><clipPath id="bc17"><rect x="149.8" y="419.5" width="35.9" height="11.4"/></clipPath></defs><g clip-path="url(#bc0)"><text transform="translate(63.2 366.7) scale(0.91 1)">Do Action</text></g>
<g clip-path="url(#bc1)"><text transform="translate(63.2 381.9) scale(0.91 1)">Set WP</text></g>
<g clip-path="url(#bc2)"><text transform="translate(63.2 397.1) scale(0.91 1)">Set Mode</text></g>
<g clip-path="url(#bc3)"><text transform="translate(63.2 409.3) scale(0.91 1)">Set</text><text transform="translate(63.2 415.2) scale(0.91 1)">Mount</text></g>
<g clip-path="url(#bc4)"><text transform="translate(93.9 366.7) scale(0.91 1)">Auto</text></g>
<g clip-path="url(#bc5)"><text transform="translate(93.9 381.9) scale(0.91 1)">Loiter</text></g>
<g clip-path="url(#bc6)"><text transform="translate(93.9 397.1) scale(0.91 1)">RTL</text></g>
<g clip-path="url(#bc7)"><text transform="translate(93.9 412.3) scale(0.91 1)">Joystick</text></g>
<g clip-path="url(#bc8)"><text transform="translate(127.8 363.7) scale(0.91 1)">Set Home</text><text transform="translate(127.8 369.6) scale(0.91 1)">Alt</text></g>
<g clip-path="url(#bc9)"><text transform="translate(127.8 378.9) scale(0.91 1)">Restart</text><text transform="translate(127.8 384.9) scale(0.91 1)">Mission</text></g>
<g clip-path="url(#bc10)"><text transform="translate(127.8 394.1) scale(0.91 1)">Raw Sensor</text><text transform="translate(127.8 400.1) scale(0.91 1)">View</text></g>
<g clip-path="url(#bc11)"><text transform="translate(127.8 412.3) scale(0.91 1)">Arm/ Disarm</text></g>
<g clip-path="url(#bc12)"><text transform="translate(127.8 424.5) scale(0.91 1)">Resume</text><text transform="translate(127.8 430.4) scale(0.91 1)">Mission</text></g>
<g clip-path="url(#bc13)"><text transform="translate(193.2 365.2) scale(0.91 1)">Change</text><text transform="translate(193.2 371.1) scale(0.91 1)">Speed</text></g>
<g clip-path="url(#bc14)"><text transform="translate(193.2 380.4) scale(0.91 1)">Change</text><text transform="translate(193.2 386.4) scale(0.91 1)">Alt</text></g>
<g clip-path="url(#bc15)"><text transform="translate(193.2 395.6) scale(0.91 1)">Set</text><text transform="translate(193.2 401.6) scale(0.91 1)">Loiter Ra</text></g>
<g clip-path="url(#bc16)"><text transform="translate(168.3 412.3) scale(0.91 1)">Clear Track</text></g>
<g clip-path="url(#bc17)"><text transform="translate(167.8 424.5) scale(0.91 1)">Abort</text><text transform="translate(167.8 430.4) scale(0.91 1)">Landing</text></g></svg>
<!--/LEFT-->
</div>
<div id="split" class="abs"></div>
<div id="split2" class="abs"></div>
<div id="chart" class="abs">
<!--CHART-->
<svg class="abs" style="left:0;top:0" width="627" height="250" viewBox="397 44 627 250" font-family="'Liberation Sans',sans-serif">
<rect x="397" y="44" width="627" height="250" fill="#262729"/>
<rect x="397" y="44" width="0.6" height="250" fill="#444446"/>
<rect x="397.5" y="44.3" width="626.5" height="249.7" fill="#808080"/>
<rect x="399.1" y="45.9" width="623.9" height="247.7" fill="#0c0c0c"/>
<rect x="399.1" y="293.6" width="623.9" height="0.4" fill="#29292b"/>
<rect x="400.9" y="47.4" width="620.5" height="244.9" fill="#303030"/>
<rect x="400.9" y="47.4" width="618.9" height="244.9" fill="#373737"/>
<text x="710.6" y="62.6" font-size="10" font-weight="bold" fill="#fff" text-anchor="middle">Tuning</text>
<rect x="444.6" y="72.8" width="346.8" height="72.6" fill="#868686" stroke="#1c1c1c" stroke-width="0.7"/>
<line x1="446.6" y1="76.9" x2="464.4" y2="76.9" stroke="#0b8a0b" stroke-width="1.3"/>
<text x="470.4" y="79.5" font-size="7.55" fill="#fff">roll (Min: -3 Max: -3 Mean: -3)</text>
<line x1="446.6" y1="86.0" x2="464.4" y2="86.0" stroke="#f01818" stroke-width="1.3"/>
<text x="470.4" y="88.6" font-size="7.55" fill="#fff">nav_roll (Min: -4 Max: -3 Mean: -3)</text>
<line x1="446.6" y1="95.0" x2="464.4" y2="95.0" stroke="#1018e8" stroke-width="1.3" stroke-dasharray="1.2 0.5"/>
<text x="470.4" y="97.6" font-size="7.55" fill="#fff">pitch (Min: 0 Max: 0 Mean: 0)</text>
<line x1="446.6" y1="104.1" x2="464.4" y2="104.1" stroke="#f09808" stroke-width="1.3"/>
<text x="470.4" y="106.7" font-size="7.55" fill="#fff">nav_pitch (Min: 0 Max: 0 Mean: 0)</text>
<line x1="446.6" y1="113.1" x2="464.4" y2="113.1" stroke="#f4f410" stroke-width="1.3" stroke-dasharray="1.8 0.4"/>
<text x="470.4" y="115.7" font-size="7.55" fill="#fff">yaw (Min: 280 Max: 284 Mean: 283)</text>
<line x1="446.6" y1="122.2" x2="464.4" y2="122.2" stroke="#f010f0" stroke-width="1.3"/>
<text x="470.4" y="124.8" font-size="7.55" fill="#fff">nav_bearing (Min: -79 Max: -77 Mean: -78)</text>
<line x1="446.6" y1="131.3" x2="464.4" y2="131.3" stroke="#780a6a" stroke-width="1.3"/>
<text x="470.4" y="133.9" font-size="7.55" fill="#fff">alt (Min: 1324 Max: 1344 Mean: 1333)</text>
<line x1="446.6" y1="140.3" x2="464.4" y2="140.3" stroke="#38d838" stroke-width="1.3"/>
<text x="470.4" y="142.9" font-size="7.55" fill="#fff">targetalt (Min: 0 Max: 743 Mean: 20)</text>
<rect x="444.6" y="148.6" width="537.6" height="108.6" fill="#1f1f1f"/>
<line x1="444.6" y1="162.6" x2="982.2" y2="162.6" stroke="#484848" stroke-width="0.8"/>
<line x1="444.6" y1="257.2" x2="982.2" y2="257.2" stroke="#555" stroke-width="0.6"/>
<line x1="462.2" y1="148.6" x2="462.2" y2="257.2" stroke="#c8c8c8" stroke-width="0.8" stroke-dasharray="1 1.6" opacity="0.8"/>
<line x1="462.2" y1="148.6" x2="462.2" y2="151.79999999999998" stroke="#e8e8e8" stroke-width="1"/>
<line x1="462.2" y1="254.0" x2="462.2" y2="259.8" stroke="#e8e8e8" stroke-width="1"/>
<line x1="569.8" y1="148.6" x2="569.8" y2="257.2" stroke="#c8c8c8" stroke-width="0.8" stroke-dasharray="1 1.6" opacity="0.8"/>
<line x1="569.8" y1="148.6" x2="569.8" y2="151.79999999999998" stroke="#e8e8e8" stroke-width="1"/>
<line x1="569.8" y1="254.0" x2="569.8" y2="259.8" stroke="#e8e8e8" stroke-width="1"/>
<line x1="677.4" y1="148.6" x2="677.4" y2="257.2" stroke="#c8c8c8" stroke-width="0.8" stroke-dasharray="1 1.6" opacity="0.8"/>
<line x1="677.4" y1="148.6" x2="677.4" y2="151.79999999999998" stroke="#e8e8e8" stroke-width="1"/>
<line x1="677.4" y1="254.0" x2="677.4" y2="259.8" stroke="#e8e8e8" stroke-width="1"/>
<line x1="785.0" y1="148.6" x2="785.0" y2="257.2" stroke="#c8c8c8" stroke-width="0.8" stroke-dasharray="1 1.6" opacity="0.8"/>
<line x1="785.0" y1="148.6" x2="785.0" y2="151.79999999999998" stroke="#e8e8e8" stroke-width="1"/>
<line x1="785.0" y1="254.0" x2="785.0" y2="259.8" stroke="#e8e8e8" stroke-width="1"/>
<line x1="892.6" y1="148.6" x2="892.6" y2="257.2" stroke="#c8c8c8" stroke-width="0.8" stroke-dasharray="1 1.6" opacity="0.8"/>
<line x1="892.6" y1="148.6" x2="892.6" y2="151.79999999999998" stroke="#e8e8e8" stroke-width="1"/>
<line x1="892.6" y1="254.0" x2="892.6" y2="259.8" stroke="#e8e8e8" stroke-width="1"/>
<line x1="489.1" y1="149.0" x2="489.1" y2="150.6" stroke="#d8d8d8" stroke-width="0.9"/>
<line x1="489.1" y1="255.0" x2="489.1" y2="258.2" stroke="#d8d8d8" stroke-width="0.9"/>
<line x1="516.0" y1="149.0" x2="516.0" y2="150.6" stroke="#d8d8d8" stroke-width="0.9"/>
<line x1="516.0" y1="255.0" x2="516.0" y2="258.2" stroke="#d8d8d8" stroke-width="0.9"/>
<line x1="542.9" y1="149.0" x2="542.9" y2="150.6" stroke="#d8d8d8" stroke-width="0.9"/>
<line x1="542.9" y1="255.0" x2="542.9" y2="258.2" stroke="#d8d8d8" stroke-width="0.9"/>
<line x1="596.7" y1="149.0" x2="596.7" y2="150.6" stroke="#d8d8d8" stroke-width="0.9"/>
<line x1="596.7" y1="255.0" x2="596.7" y2="258.2" stroke="#d8d8d8" stroke-width="0.9"/>
<line x1="623.6" y1="149.0" x2="623.6" y2="150.6" stroke="#d8d8d8" stroke-width="0.9"/>
<line x1="623.6" y1="255.0" x2="623.6" y2="258.2" stroke="#d8d8d8" stroke-width="0.9"/>
<line x1="650.5" y1="149.0" x2="650.5" y2="150.6" stroke="#d8d8d8" stroke-width="0.9"/>
<line x1="650.5" y1="255.0" x2="650.5" y2="258.2" stroke="#d8d8d8" stroke-width="0.9"/>
<line x1="704.3" y1="149.0" x2="704.3" y2="150.6" stroke="#d8d8d8" stroke-width="0.9"/>
<line x1="704.3" y1="255.0" x2="704.3" y2="258.2" stroke="#d8d8d8" stroke-width="0.9"/>
<line x1="731.2" y1="149.0" x2="731.2" y2="150.6" stroke="#d8d8d8" stroke-width="0.9"/>
<line x1="731.2" y1="255.0" x2="731.2" y2="258.2" stroke="#d8d8d8" stroke-width="0.9"/>
<line x1="758.1" y1="149.0" x2="758.1" y2="150.6" stroke="#d8d8d8" stroke-width="0.9"/>
<line x1="758.1" y1="255.0" x2="758.1" y2="258.2" stroke="#d8d8d8" stroke-width="0.9"/>
<line x1="811.9" y1="149.0" x2="811.9" y2="150.6" stroke="#d8d8d8" stroke-width="0.9"/>
<line x1="811.9" y1="255.0" x2="811.9" y2="258.2" stroke="#d8d8d8" stroke-width="0.9"/>
<line x1="838.8" y1="149.0" x2="838.8" y2="150.6" stroke="#d8d8d8" stroke-width="0.9"/>
<line x1="838.8" y1="255.0" x2="838.8" y2="258.2" stroke="#d8d8d8" stroke-width="0.9"/>
<line x1="865.7" y1="149.0" x2="865.7" y2="150.6" stroke="#d8d8d8" stroke-width="0.9"/>
<line x1="865.7" y1="255.0" x2="865.7" y2="258.2" stroke="#d8d8d8" stroke-width="0.9"/>
<line x1="919.5" y1="149.0" x2="919.5" y2="150.6" stroke="#d8d8d8" stroke-width="0.9"/>
<line x1="919.5" y1="255.0" x2="919.5" y2="258.2" stroke="#d8d8d8" stroke-width="0.9"/>
<line x1="946.4" y1="149.0" x2="946.4" y2="150.6" stroke="#d8d8d8" stroke-width="0.9"/>
<line x1="946.4" y1="255.0" x2="946.4" y2="258.2" stroke="#d8d8d8" stroke-width="0.9"/>
<line x1="973.3" y1="149.0" x2="973.3" y2="150.6" stroke="#d8d8d8" stroke-width="0.9"/>
<line x1="973.3" y1="255.0" x2="973.3" y2="258.2" stroke="#d8d8d8" stroke-width="0.9"/>
<line x1="441.6" y1="162.6" x2="448.0" y2="162.6" stroke="#c8c8c8" stroke-width="1"/>
<text x="435.8" y="165.7" font-size="8.6" fill="#fff" text-anchor="end">0</text>
<line x1="441.6" y1="185.9" x2="448.0" y2="185.9" stroke="#c8c8c8" stroke-width="1"/>
<text x="435.8" y="189.0" font-size="8.6" fill="#fff" text-anchor="end">-1</text>
<line x1="441.6" y1="209.2" x2="448.0" y2="209.2" stroke="#c8c8c8" stroke-width="1"/>
<text x="435.8" y="212.3" font-size="8.6" fill="#fff" text-anchor="end">-2</text>
<line x1="441.6" y1="232.5" x2="448.0" y2="232.5" stroke="#c8c8c8" stroke-width="1"/>
<text x="435.8" y="235.6" font-size="8.6" fill="#fff" text-anchor="end">-3</text>
<line x1="441.6" y1="255.8" x2="448.0" y2="255.8" stroke="#c8c8c8" stroke-width="1"/>
<text x="435.8" y="258.9" font-size="8.6" fill="#fff" text-anchor="end">-4</text>
<line x1="443.40000000000003" y1="153.3" x2="446.0" y2="153.3" stroke="#b8b8b8" stroke-width="0.8"/>
<line x1="443.40000000000003" y1="157.9" x2="446.0" y2="157.9" stroke="#b8b8b8" stroke-width="0.8"/>
<line x1="443.40000000000003" y1="167.3" x2="446.0" y2="167.3" stroke="#b8b8b8" stroke-width="0.8"/>
<line x1="443.40000000000003" y1="171.9" x2="446.0" y2="171.9" stroke="#b8b8b8" stroke-width="0.8"/>
<line x1="443.40000000000003" y1="176.6" x2="446.0" y2="176.6" stroke="#b8b8b8" stroke-width="0.8"/>
<line x1="443.40000000000003" y1="181.2" x2="446.0" y2="181.2" stroke="#b8b8b8" stroke-width="0.8"/>
<line x1="443.40000000000003" y1="190.6" x2="446.0" y2="190.6" stroke="#b8b8b8" stroke-width="0.8"/>
<line x1="443.40000000000003" y1="195.2" x2="446.0" y2="195.2" stroke="#b8b8b8" stroke-width="0.8"/>
<line x1="443.40000000000003" y1="199.9" x2="446.0" y2="199.9" stroke="#b8b8b8" stroke-width="0.8"/>
<line x1="443.40000000000003" y1="204.5" x2="446.0" y2="204.5" stroke="#b8b8b8" stroke-width="0.8"/>
<line x1="443.40000000000003" y1="213.9" x2="446.0" y2="213.9" stroke="#b8b8b8" stroke-width="0.8"/>
<line x1="443.40000000000003" y1="218.5" x2="446.0" y2="218.5" stroke="#b8b8b8" stroke-width="0.8"/>
<line x1="443.40000000000003" y1="223.2" x2="446.0" y2="223.2" stroke="#b8b8b8" stroke-width="0.8"/>
<line x1="443.40000000000003" y1="227.8" x2="446.0" y2="227.8" stroke="#b8b8b8" stroke-width="0.8"/>
<line x1="443.40000000000003" y1="237.2" x2="446.0" y2="237.2" stroke="#b8b8b8" stroke-width="0.8"/>
<line x1="443.40000000000003" y1="241.8" x2="446.0" y2="241.8" stroke="#b8b8b8" stroke-width="0.8"/>
<line x1="443.40000000000003" y1="246.5" x2="446.0" y2="246.5" stroke="#b8b8b8" stroke-width="0.8"/>
<line x1="443.40000000000003" y1="251.1" x2="446.0" y2="251.1" stroke="#b8b8b8" stroke-width="0.8"/>
<text x="462.2" y="271.9" font-size="8.6" fill="#fff" text-anchor="middle">199.210</text>
<text x="569.8" y="271.9" font-size="8.6" fill="#fff" text-anchor="middle">199.212</text>
<text x="677.4" y="271.9" font-size="8.6" fill="#fff" text-anchor="middle">199.214</text>
<text x="785.0" y="271.9" font-size="8.6" fill="#fff" text-anchor="middle">199.216</text>
<text x="892.6" y="271.9" font-size="8.6" fill="#fff" text-anchor="middle">199.218</text>
<text x="713.4" y="285.2" font-size="8.9" font-weight="bold" fill="#fff" text-anchor="middle">Time (s) (10^3)</text>
<text transform="translate(415.2 203) rotate(-90)" font-size="8.9" font-weight="bold" fill="#fff" text-anchor="middle">Unit</text>
<path d="M444.8 235.1 H462.9 L465.9 234.2 H504.0 L507.0 233.5 H523.5 L526.5 232.8 H539.1 L542.1 232.5 H561.5 L564.5 232.1 H643.2 L646.2 230.7 H676.0 L679.0 231.4 H698.3 L701.3 231.8 H770.9 L773.9 232.3 H790.8 L793.8 232.8 H829.5 L832.5 233.2 H844.7 L847.7 232.3 H864.5 L867.5 233.2 H873.7" fill="none" stroke="#0b840b" stroke-width="1.4" stroke-linejoin="round"/>
<path d="M444.8 244.3 H475.5 L478.5 243.6 H519.2 L522.2 243.1 H557.5 L560.5 241.7 H643.2 L646.2 241.0 H680.5 L683.5 241.7 H718.2 L721.2 242.4 H758.0 L761.0 242.9 H873.7" fill="none" stroke="#f01010" stroke-width="1.5" stroke-linejoin="round"/>
<path d="M444.8 160.0 H480.5 L483.5 159.3 H505.1 L508.1 159.0 H522.5 L525.5 157.8 H539.5 L542.5 158.3 H597.5 L600.5 159.0 H618.5 L621.5 158.5 H643.2 L646.2 157.0 H676.0 L679.0 158.2 H753.3 L756.3 158.8 H829.5 L832.5 159.8 H844.5 L847.5 159.3 H865.5 L868.5 158.8 H873.7" fill="none" stroke="#1014e8" stroke-width="1.6" stroke-linejoin="round"/>
<path d="M444.8 166.5 H475.5 L478.5 165.8 H519.2 L522.2 165.4 H557.5 L560.5 164.6 H718.2 L721.2 165.9 H796.5 L799.5 166.3 H838.9 L841.9 165.7 H873.7" fill="none" stroke="#f09a08" stroke-width="1.5" stroke-linejoin="round"/>
</svg>
<!--/CHART-->
</div>
<div id="map" class="abs">
<!--MAP-->
<svg class="abs" style="left:0;top:0" width="625" height="266" viewBox="399 294 625 266" font-family="'Liberation Sans',sans-serif">
<rect x="399" y="294" width="625" height="266" fill="#262729"/>
<clipPath id="mapclip"><rect x="400.5" y="296" width="597.0" height="242.89999999999998"/></clipPath>
<rect x="400.5" y="296" width="597.0" height="242.89999999999998" fill="#6b3a2a"/>
<g clip-path="url(#mapclip)">
<rect x="400.5" y="330.4" width="34.5" height="34.5" fill="#000000" opacity="0.014"/>
<rect x="400.5" y="399.2" width="34.5" height="34.5" fill="#000000" opacity="0.017"/>
<rect x="400.5" y="502.4" width="34.5" height="34.5" fill="#000000" opacity="0.018"/>
<rect x="434.9" y="296.0" width="34.5" height="34.5" fill="#000000" opacity="0.019"/>
<rect x="434.9" y="364.8" width="34.5" height="34.5" fill="#000000" opacity="0.017"/>
<rect x="434.9" y="399.2" width="34.5" height="34.5" fill="#000000" opacity="0.016"/>
<rect x="434.9" y="468.0" width="34.5" height="34.5" fill="#ffffff" opacity="0.013"/>
<rect x="434.9" y="502.4" width="34.5" height="34.5" fill="#000000" opacity="0.015"/>
<rect x="434.9" y="536.8" width="34.5" height="34.5" fill="#000000" opacity="0.011"/>
<rect x="469.3" y="330.4" width="34.5" height="34.5" fill="#ffffff" opacity="0.018"/>
<rect x="469.3" y="433.6" width="34.5" height="34.5" fill="#ffffff" opacity="0.019"/>
<rect x="469.3" y="468.0" width="34.5" height="34.5" fill="#000000" opacity="0.018"/>
<rect x="469.3" y="502.4" width="34.5" height="34.5" fill="#ffffff" opacity="0.014"/>
<rect x="469.3" y="536.8" width="34.5" height="34.5" fill="#000000" opacity="0.008"/>
<rect x="503.7" y="296.0" width="34.5" height="34.5" fill="#000000" opacity="0.014"/>
<rect x="503.7" y="330.4" width="34.5" height="34.5" fill="#000000" opacity="0.015"/>
<rect x="503.7" y="399.2" width="34.5" height="34.5" fill="#ffffff" opacity="0.013"/>
<rect x="503.7" y="433.6" width="34.5" height="34.5" fill="#000000" opacity="0.013"/>
<rect x="538.1" y="330.4" width="34.5" height="34.5" fill="#000000" opacity="0.017"/>
<rect x="538.1" y="364.8" width="34.5" height="34.5" fill="#000000" opacity="0.018"/>
<rect x="538.1" y="399.2" width="34.5" height="34.5" fill="#000000" opacity="0.012"/>
<rect x="572.5" y="330.4" width="34.5" height="34.5" fill="#000000" opacity="0.008"/>
<rect x="572.5" y="364.8" width="34.5" height="34.5" fill="#ffffff" opacity="0.012"/>
<rect x="572.5" y="433.6" width="34.5" height="34.5" fill="#000000" opacity="0.010"/>
<rect x="572.5" y="536.8" width="34.5" height="34.5" fill="#ffffff" opacity="0.015"/>
<rect x="606.9" y="296.0" width="34.5" height="34.5" fill="#ffffff" opacity="0.009"/>
<rect x="606.9" y="330.4" width="34.5" height="34.5" fill="#000000" opacity="0.008"/>
<rect x="606.9" y="364.8" width="34.5" height="34.5" fill="#ffffff" opacity="0.019"/>
<rect x="606.9" y="399.2" width="34.5" height="34.5" fill="#000000" opacity="0.015"/>
<rect x="606.9" y="468.0" width="34.5" height="34.5" fill="#ffffff" opacity="0.010"/>
<rect x="606.9" y="502.4" width="34.5" height="34.5" fill="#000000" opacity="0.014"/>
<rect x="641.3" y="296.0" width="34.5" height="34.5" fill="#000000" opacity="0.018"/>
<rect x="641.3" y="364.8" width="34.5" height="34.5" fill="#ffffff" opacity="0.011"/>
<rect x="641.3" y="433.6" width="34.5" height="34.5" fill="#ffffff" opacity="0.015"/>
<rect x="675.7" y="364.8" width="34.5" height="34.5" fill="#ffffff" opacity="0.014"/>
<rect x="675.7" y="399.2" width="34.5" height="34.5" fill="#ffffff" opacity="0.018"/>
<rect x="675.7" y="502.4" width="34.5" height="34.5" fill="#000000" opacity="0.018"/>
<rect x="675.7" y="536.8" width="34.5" height="34.5" fill="#ffffff" opacity="0.008"/>
<rect x="710.1" y="330.4" width="34.5" height="34.5" fill="#ffffff" opacity="0.020"/>
<rect x="710.1" y="364.8" width="34.5" height="34.5" fill="#ffffff" opacity="0.013"/>
<rect x="710.1" y="399.2" width="34.5" height="34.5" fill="#000000" opacity="0.009"/>
<rect x="710.1" y="502.4" width="34.5" height="34.5" fill="#000000" opacity="0.019"/>
<rect x="744.5" y="296.0" width="34.5" height="34.5" fill="#000000" opacity="0.013"/>
<rect x="744.5" y="330.4" width="34.5" height="34.5" fill="#000000" opacity="0.015"/>
<rect x="744.5" y="364.8" width="34.5" height="34.5" fill="#000000" opacity="0.018"/>
<rect x="744.5" y="399.2" width="34.5" height="34.5" fill="#ffffff" opacity="0.011"/>
<rect x="744.5" y="433.6" width="34.5" height="34.5" fill="#000000" opacity="0.015"/>
<rect x="744.5" y="468.0" width="34.5" height="34.5" fill="#000000" opacity="0.010"/>
<rect x="744.5" y="536.8" width="34.5" height="34.5" fill="#ffffff" opacity="0.015"/>
<rect x="778.9" y="296.0" width="34.5" height="34.5" fill="#000000" opacity="0.017"/>
<rect x="778.9" y="399.2" width="34.5" height="34.5" fill="#ffffff" opacity="0.015"/>
<rect x="778.9" y="433.6" width="34.5" height="34.5" fill="#ffffff" opacity="0.013"/>
<rect x="778.9" y="468.0" width="34.5" height="34.5" fill="#ffffff" opacity="0.015"/>
<rect x="778.9" y="502.4" width="34.5" height="34.5" fill="#000000" opacity="0.009"/>
<rect x="813.3" y="330.4" width="34.5" height="34.5" fill="#ffffff" opacity="0.015"/>
<rect x="813.3" y="364.8" width="34.5" height="34.5" fill="#ffffff" opacity="0.018"/>
<rect x="813.3" y="399.2" width="34.5" height="34.5" fill="#000000" opacity="0.014"/>
<rect x="813.3" y="433.6" width="34.5" height="34.5" fill="#000000" opacity="0.013"/>
<rect x="813.3" y="468.0" width="34.5" height="34.5" fill="#000000" opacity="0.011"/>
<rect x="813.3" y="502.4" width="34.5" height="34.5" fill="#000000" opacity="0.011"/>
<rect x="847.7" y="330.4" width="34.5" height="34.5" fill="#000000" opacity="0.009"/>
<rect x="847.7" y="364.8" width="34.5" height="34.5" fill="#000000" opacity="0.020"/>
<rect x="847.7" y="502.4" width="34.5" height="34.5" fill="#ffffff" opacity="0.018"/>
<rect x="882.1" y="399.2" width="34.5" height="34.5" fill="#000000" opacity="0.018"/>
<rect x="882.1" y="433.6" width="34.5" height="34.5" fill="#ffffff" opacity="0.016"/>
<rect x="882.1" y="468.0" width="34.5" height="34.5" fill="#ffffff" opacity="0.011"/>
<rect x="882.1" y="502.4" width="34.5" height="34.5" fill="#ffffff" opacity="0.015"/>
<rect x="882.1" y="536.8" width="34.5" height="34.5" fill="#ffffff" opacity="0.012"/>
<rect x="916.5" y="364.8" width="34.5" height="34.5" fill="#000000" opacity="0.016"/>
<rect x="916.5" y="433.6" width="34.5" height="34.5" fill="#000000" opacity="0.018"/>
<rect x="916.5" y="468.0" width="34.5" height="34.5" fill="#000000" opacity="0.017"/>
<rect x="916.5" y="502.4" width="34.5" height="34.5" fill="#000000" opacity="0.012"/>
<rect x="916.5" y="536.8" width="34.5" height="34.5" fill="#000000" opacity="0.014"/>
<rect x="950.9" y="330.4" width="34.5" height="34.5" fill="#000000" opacity="0.018"/>
<rect x="950.9" y="364.8" width="34.5" height="34.5" fill="#000000" opacity="0.020"/>
<rect x="950.9" y="399.2" width="34.5" height="34.5" fill="#000000" opacity="0.014"/>
<rect x="950.9" y="433.6" width="34.5" height="34.5" fill="#000000" opacity="0.016"/>
<rect x="950.9" y="502.4" width="34.5" height="34.5" fill="#000000" opacity="0.019"/>
<rect x="950.9" y="536.8" width="34.5" height="34.5" fill="#ffffff" opacity="0.015"/>
<rect x="985.3" y="330.4" width="34.5" height="34.5" fill="#000000" opacity="0.014"/>
<rect x="985.3" y="364.8" width="34.5" height="34.5" fill="#000000" opacity="0.010"/>
<rect x="985.3" y="468.0" width="34.5" height="34.5" fill="#000000" opacity="0.015"/>
<rect x="985.3" y="502.4" width="34.5" height="34.5" fill="#ffffff" opacity="0.014"/>
<rect x="985.3" y="536.8" width="34.5" height="34.5" fill="#ffffff" opacity="0.020"/>
<rect x="804.7" y="304.6" width="8.7" height="8.7" fill="#ffffff" opacity="0.016"/>
<rect x="804.7" y="330.4" width="8.7" height="8.7" fill="#ffffff" opacity="0.014"/>
<rect x="813.3" y="304.6" width="8.7" height="8.7" fill="#ffffff" opacity="0.033"/>
<rect x="813.3" y="313.2" width="8.7" height="8.7" fill="#ffffff" opacity="0.024"/>
<rect x="813.3" y="321.8" width="8.7" height="8.7" fill="#ffffff" opacity="0.015"/>
<rect x="821.9" y="313.2" width="8.7" height="8.7" fill="#ffffff" opacity="0.030"/>
<rect x="821.9" y="321.8" width="8.7" height="8.7" fill="#ffffff" opacity="0.036"/>
<rect x="821.9" y="330.4" width="8.7" height="8.7" fill="#ffffff" opacity="0.026"/>
<rect x="821.9" y="339.0" width="8.7" height="8.7" fill="#ffffff" opacity="0.020"/>
<rect x="821.9" y="347.6" width="8.7" height="8.7" fill="#ffffff" opacity="0.018"/>
<rect x="821.9" y="356.2" width="8.7" height="8.7" fill="#ffffff" opacity="0.012"/>
<rect x="830.5" y="296.0" width="8.7" height="8.7" fill="#000000" opacity="0.028"/>
<rect x="830.5" y="304.6" width="8.7" height="8.7" fill="#000000" opacity="0.026"/>
<rect x="830.5" y="330.4" width="8.7" height="8.7" fill="#ffffff" opacity="0.023"/>
<rect x="830.5" y="339.0" width="8.7" height="8.7" fill="#ffffff" opacity="0.034"/>
<rect x="830.5" y="356.2" width="8.7" height="8.7" fill="#ffffff" opacity="0.023"/>
<rect x="830.5" y="364.8" width="8.7" height="8.7" fill="#ffffff" opacity="0.019"/>
<rect x="830.5" y="373.4" width="8.7" height="8.7" fill="#ffffff" opacity="0.013"/>
<rect x="839.1" y="313.2" width="8.7" height="8.7" fill="#000000" opacity="0.012"/>
<rect x="839.1" y="330.4" width="8.7" height="8.7" fill="#ffffff" opacity="0.023"/>
<rect x="839.1" y="339.0" width="8.7" height="8.7" fill="#ffffff" opacity="0.037"/>
<rect x="839.1" y="347.6" width="8.7" height="8.7" fill="#ffffff" opacity="0.028"/>
<rect x="847.7" y="296.0" width="8.7" height="8.7" fill="#ffffff" opacity="0.045"/>
<rect x="847.7" y="304.6" width="8.7" height="8.7" fill="#ffffff" opacity="0.072"/>
<rect x="847.7" y="313.2" width="8.7" height="8.7" fill="#ffffff" opacity="0.051"/>
<rect x="847.7" y="321.8" width="8.7" height="8.7" fill="#ffffff" opacity="0.043"/>
<rect x="847.7" y="330.4" width="8.7" height="8.7" fill="#ffffff" opacity="0.014"/>
<rect x="847.7" y="347.6" width="8.7" height="8.7" fill="#ffffff" opacity="0.030"/>
<rect x="847.7" y="364.8" width="8.7" height="8.7" fill="#ffffff" opacity="0.020"/>
<rect x="847.7" y="373.4" width="8.7" height="8.7" fill="#ffffff" opacity="0.019"/>
<rect x="856.3" y="296.0" width="8.7" height="8.7" fill="#ffffff" opacity="0.012"/>
<rect x="856.3" y="304.6" width="8.7" height="8.7" fill="#ffffff" opacity="0.088"/>
<rect x="856.3" y="313.2" width="8.7" height="8.7" fill="#ffffff" opacity="0.051"/>
<rect x="856.3" y="321.8" width="8.7" height="8.7" fill="#000000" opacity="0.018"/>
<rect x="856.3" y="330.4" width="8.7" height="8.7" fill="#000000" opacity="0.020"/>
<rect x="856.3" y="339.0" width="8.7" height="8.7" fill="#000000" opacity="0.015"/>
<rect x="856.3" y="347.6" width="8.7" height="8.7" fill="#ffffff" opacity="0.043"/>
<rect x="856.3" y="356.2" width="8.7" height="8.7" fill="#ffffff" opacity="0.029"/>
<rect x="856.3" y="373.4" width="8.7" height="8.7" fill="#ffffff" opacity="0.017"/>
<rect x="856.3" y="382.0" width="8.7" height="8.7" fill="#ffffff" opacity="0.013"/>
<rect x="864.9" y="296.0" width="8.7" height="8.7" fill="#ffffff" opacity="0.057"/>
<rect x="864.9" y="313.2" width="8.7" height="8.7" fill="#ffffff" opacity="0.033"/>
<rect x="864.9" y="321.8" width="8.7" height="8.7" fill="#000000" opacity="0.025"/>
<rect x="864.9" y="330.4" width="8.7" height="8.7" fill="#000000" opacity="0.035"/>
<rect x="864.9" y="339.0" width="8.7" height="8.7" fill="#ffffff" opacity="0.064"/>
<rect x="864.9" y="347.6" width="8.7" height="8.7" fill="#ffffff" opacity="0.027"/>
<rect x="864.9" y="356.2" width="8.7" height="8.7" fill="#ffffff" opacity="0.014"/>
<rect x="864.9" y="364.8" width="8.7" height="8.7" fill="#ffffff" opacity="0.033"/>
<rect x="864.9" y="382.0" width="8.7" height="8.7" fill="#ffffff" opacity="0.013"/>
<rect x="873.5" y="296.0" width="8.7" height="8.7" fill="#ffffff" opacity="0.085"/>
<rect x="873.5" y="304.6" width="8.7" height="8.7" fill="#000000" opacity="0.019"/>
<rect x="873.5" y="339.0" width="8.7" height="8.7" fill="#ffffff" opacity="0.029"/>
<rect x="873.5" y="373.4" width="8.7" height="8.7" fill="#ffffff" opacity="0.025"/>
<rect x="882.1" y="296.0" width="8.7" height="8.7" fill="#ffffff" opacity="0.044"/>
<rect x="882.1" y="304.6" width="8.7" height="8.7" fill="#ffffff" opacity="0.099"/>
<rect x="882.1" y="313.2" width="8.7" height="8.7" fill="#ffffff" opacity="0.017"/>
<rect x="882.1" y="321.8" width="8.7" height="8.7" fill="#ffffff" opacity="0.095"/>
<rect x="882.1" y="330.4" width="8.7" height="8.7" fill="#ffffff" opacity="0.025"/>
<rect x="882.1" y="339.0" width="8.7" height="8.7" fill="#ffffff" opacity="0.025"/>
<rect x="882.1" y="347.6" width="8.7" height="8.7" fill="#ffffff" opacity="0.021"/>
<rect x="882.1" y="356.2" width="8.7" height="8.7" fill="#000000" opacity="0.026"/>
<rect x="890.7" y="296.0" width="8.7" height="8.7" fill="#000000" opacity="0.026"/>
<rect x="890.7" y="304.6" width="8.7" height="8.7" fill="#ffffff" opacity="0.025"/>
<rect x="890.7" y="313.2" width="8.7" height="8.7" fill="#ffffff" opacity="0.068"/>
<rect x="890.7" y="321.8" width="8.7" height="8.7" fill="#ffffff" opacity="0.040"/>
<rect x="890.7" y="339.0" width="8.7" height="8.7" fill="#ffffff" opacity="0.026"/>
<rect x="890.7" y="347.6" width="8.7" height="8.7" fill="#ffffff" opacity="0.026"/>
<rect x="890.7" y="356.2" width="8.7" height="8.7" fill="#ffffff" opacity="0.043"/>
<rect x="890.7" y="364.8" width="8.7" height="8.7" fill="#000000" opacity="0.016"/>
<rect x="890.7" y="373.4" width="8.7" height="8.7" fill="#ffffff" opacity="0.012"/>
<rect x="899.3" y="296.0" width="8.7" height="8.7" fill="#ffffff" opacity="0.076"/>
<rect x="899.3" y="304.6" width="8.7" height="8.7" fill="#ffffff" opacity="0.031"/>
<rect x="899.3" y="313.2" width="8.7" height="8.7" fill="#ffffff" opacity="0.040"/>
<rect x="899.3" y="321.8" width="8.7" height="8.7" fill="#ffffff" opacity="0.074"/>
<rect x="899.3" y="330.4" width="8.7" height="8.7" fill="#ffffff" opacity="0.098"/>
<rect x="899.3" y="339.0" width="8.7" height="8.7" fill="#ffffff" opacity="0.017"/>
<rect x="899.3" y="347.6" width="8.7" height="8.7" fill="#ffffff" opacity="0.035"/>
<rect x="899.3" y="356.2" width="8.7" height="8.7" fill="#ffffff" opacity="0.018"/>
<rect x="899.3" y="364.8" width="8.7" height="8.7" fill="#ffffff" opacity="0.015"/>
<rect x="899.3" y="373.4" width="8.7" height="8.7" fill="#ffffff" opacity="0.021"/>
<rect x="907.9" y="296.0" width="8.7" height="8.7" fill="#ffffff" opacity="0.026"/>
<rect x="907.9" y="304.6" width="8.7" height="8.7" fill="#ffffff" opacity="0.105"/>
<rect x="907.9" y="313.2" width="8.7" height="8.7" fill="#ffffff" opacity="0.064"/>
<rect x="907.9" y="321.8" width="8.7" height="8.7" fill="#ffffff" opacity="0.094"/>
<rect x="907.9" y="330.4" width="8.7" height="8.7" fill="#ffffff" opacity="0.105"/>
<rect x="907.9" y="347.6" width="8.7" height="8.7" fill="#ffffff" opacity="0.031"/>
<rect x="907.9" y="356.2" width="8.7" height="8.7" fill="#ffffff" opacity="0.067"/>
<rect x="907.9" y="364.8" width="8.7" height="8.7" fill="#ffffff" opacity="0.043"/>
<rect x="916.5" y="296.0" width="8.7" height="8.7" fill="#000000" opacity="0.043"/>
<rect x="916.5" y="304.6" width="8.7" height="8.7" fill="#000000" opacity="0.014"/>
<rect x="916.5" y="313.2" width="8.7" height="8.7" fill="#000000" opacity="0.043"/>
<rect x="916.5" y="321.8" width="8.7" height="8.7" fill="#ffffff" opacity="0.059"/>
<rect x="916.5" y="330.4" width="8.7" height="8.7" fill="#ffffff" opacity="0.078"/>
<rect x="916.5" y="339.0" width="8.7" height="8.7" fill="#ffffff" opacity="0.096"/>
<rect x="916.5" y="347.6" width="8.7" height="8.7" fill="#000000" opacity="0.024"/>
<rect x="916.5" y="356.2" width="8.7" height="8.7" fill="#ffffff" opacity="0.045"/>
<rect x="916.5" y="364.8" width="8.7" height="8.7" fill="#ffffff" opacity="0.030"/>
<rect x="916.5" y="382.0" width="8.7" height="8.7" fill="#ffffff" opacity="0.022"/>
<rect x="925.1" y="296.0" width="8.7" height="8.7" fill="#000000" opacity="0.018"/>
<rect x="925.1" y="304.6" width="8.7" height="8.7" fill="#ffffff" opacity="0.107"/>
<rect x="925.1" y="313.2" width="8.7" height="8.7" fill="#ffffff" opacity="0.013"/>
<rect x="925.1" y="321.8" width="8.7" height="8.7" fill="#ffffff" opacity="0.028"/>
<rect x="925.1" y="330.4" width="8.7" height="8.7" fill="#ffffff" opacity="0.113"/>
<rect x="925.1" y="339.0" width="8.7" height="8.7" fill="#ffffff" opacity="0.087"/>
<rect x="925.1" y="347.6" width="8.7" height="8.7" fill="#000000" opacity="0.025"/>
<rect x="925.1" y="356.2" width="8.7" height="8.7" fill="#ffffff" opacity="0.013"/>
<rect x="925.1" y="364.8" width="8.7" height="8.7" fill="#ffffff" opacity="0.019"/>
<rect x="933.7" y="296.0" width="8.7" height="8.7" fill="#ffffff" opacity="0.068"/>
<rect x="933.7" y="304.6" width="8.7" height="8.7" fill="#000000" opacity="0.052"/>
<rect x="933.7" y="313.2" width="8.7" height="8.7" fill="#ffffff" opacity="0.039"/>
<rect x="933.7" y="321.8" width="8.7" height="8.7" fill="#ffffff" opacity="0.020"/>
<rect x="933.7" y="330.4" width="8.7" height="8.7" fill="#000000" opacity="0.052"/>
<rect x="933.7" y="347.6" width="8.7" height="8.7" fill="#ffffff" opacity="0.048"/>
<rect x="933.7" y="356.2" width="8.7" height="8.7" fill="#ffffff" opacity="0.025"/>
<rect x="933.7" y="364.8" width="8.7" height="8.7" fill="#000000" opacity="0.027"/>
<rect x="933.7" y="373.4" width="8.7" height="8.7" fill="#ffffff" opacity="0.048"/>
<rect x="933.7" y="382.0" width="8.7" height="8.7" fill="#ffffff" opacity="0.021"/>
<rect x="942.3" y="296.0" width="8.7" height="8.7" fill="#000000" opacity="0.037"/>
<rect x="942.3" y="313.2" width="8.7" height="8.7" fill="#000000" opacity="0.048"/>
<rect x="942.3" y="321.8" width="8.7" height="8.7" fill="#ffffff" opacity="0.077"/>
<rect x="942.3" y="339.0" width="8.7" height="8.7" fill="#000000" opacity="0.033"/>
<rect x="942.3" y="347.6" width="8.7" height="8.7" fill="#ffffff" opacity="0.017"/>
<rect x="942.3" y="356.2" width="8.7" height="8.7" fill="#ffffff" opacity="0.082"/>
<rect x="942.3" y="364.8" width="8.7" height="8.7" fill="#ffffff" opacity="0.054"/>
<rect x="950.9" y="296.0" width="8.7" height="8.7" fill="#ffffff" opacity="0.042"/>
<rect x="950.9" y="304.6" width="8.7" height="8.7" fill="#ffffff" opacity="0.064"/>
<rect x="950.9" y="313.2" width="8.7" height="8.7" fill="#000000" opacity="0.040"/>
<rect x="950.9" y="321.8" width="8.7" height="8.7" fill="#000000" opacity="0.045"/>
<rect x="950.9" y="330.4" width="8.7" height="8.7" fill="#ffffff" opacity="0.062"/>
<rect x="950.9" y="339.0" width="8.7" height="8.7" fill="#ffffff" opacity="0.017"/>
<rect x="950.9" y="347.6" width="8.7" height="8.7" fill="#000000" opacity="0.043"/>
<rect x="950.9" y="356.2" width="8.7" height="8.7" fill="#ffffff" opacity="0.091"/>
<rect x="950.9" y="364.8" width="8.7" height="8.7" fill="#ffffff" opacity="0.036"/>
<rect x="950.9" y="373.4" width="8.7" height="8.7" fill="#ffffff" opacity="0.039"/>
<rect x="959.5" y="296.0" width="8.7" height="8.7" fill="#000000" opacity="0.044"/>
<rect x="959.5" y="304.6" width="8.7" height="8.7" fill="#ffffff" opacity="0.092"/>
<rect x="959.5" y="313.2" width="8.7" height="8.7" fill="#ffffff" opacity="0.022"/>
<rect x="959.5" y="330.4" width="8.7" height="8.7" fill="#ffffff" opacity="0.039"/>
<rect x="959.5" y="339.0" width="8.7" height="8.7" fill="#ffffff" opacity="0.103"/>
<rect x="959.5" y="356.2" width="8.7" height="8.7" fill="#000000" opacity="0.030"/>
<rect x="959.5" y="364.8" width="8.7" height="8.7" fill="#ffffff" opacity="0.025"/>
<rect x="968.1" y="296.0" width="8.7" height="8.7" fill="#000000" opacity="0.046"/>
<rect x="968.1" y="304.6" width="8.7" height="8.7" fill="#000000" opacity="0.021"/>
<rect x="968.1" y="330.4" width="8.7" height="8.7" fill="#ffffff" opacity="0.074"/>
<rect x="968.1" y="347.6" width="8.7" height="8.7" fill="#ffffff" opacity="0.030"/>
<rect x="968.1" y="356.2" width="8.7" height="8.7" fill="#000000" opacity="0.024"/>
<rect x="968.1" y="373.4" width="8.7" height="8.7" fill="#000000" opacity="0.028"/>
<rect x="976.7" y="296.0" width="8.7" height="8.7" fill="#ffffff" opacity="0.070"/>
<rect x="976.7" y="304.6" width="8.7" height="8.7" fill="#ffffff" opacity="0.039"/>
<rect x="976.7" y="313.2" width="8.7" height="8.7" fill="#000000" opacity="0.023"/>
<rect x="976.7" y="321.8" width="8.7" height="8.7" fill="#ffffff" opacity="0.026"/>
<rect x="976.7" y="330.4" width="8.7" height="8.7" fill="#ffffff" opacity="0.104"/>
<rect x="976.7" y="339.0" width="8.7" height="8.7" fill="#000000" opacity="0.037"/>
<rect x="976.7" y="347.6" width="8.7" height="8.7" fill="#ffffff" opacity="0.084"/>
<rect x="976.7" y="356.2" width="8.7" height="8.7" fill="#ffffff" opacity="0.018"/>
<rect x="976.7" y="364.8" width="8.7" height="8.7" fill="#ffffff" opacity="0.023"/>
<rect x="976.7" y="373.4" width="8.7" height="8.7" fill="#ffffff" opacity="0.049"/>
<rect x="985.3" y="296.0" width="8.7" height="8.7" fill="#ffffff" opacity="0.062"/>
<rect x="985.3" y="304.6" width="8.7" height="8.7" fill="#ffffff" opacity="0.112"/>
<rect x="985.3" y="321.8" width="8.7" height="8.7" fill="#ffffff" opacity="0.086"/>
<rect x="985.3" y="330.4" width="8.7" height="8.7" fill="#ffffff" opacity="0.065"/>
<rect x="985.3" y="339.0" width="8.7" height="8.7" fill="#ffffff" opacity="0.053"/>
<rect x="985.3" y="347.6" width="8.7" height="8.7" fill="#ffffff" opacity="0.014"/>
<rect x="985.3" y="364.8" width="8.7" height="8.7" fill="#000000" opacity="0.037"/>
<rect x="985.3" y="373.4" width="8.7" height="8.7" fill="#000000" opacity="0.019"/>
<rect x="985.3" y="382.0" width="8.7" height="8.7" fill="#000000" opacity="0.015"/>
<rect x="993.9" y="304.6" width="8.7" height="8.7" fill="#000000" opacity="0.027"/>
<rect x="993.9" y="313.2" width="8.7" height="8.7" fill="#000000" opacity="0.041"/>
<rect x="993.9" y="321.8" width="8.7" height="8.7" fill="#ffffff" opacity="0.088"/>
<rect x="993.9" y="330.4" width="8.7" height="8.7" fill="#ffffff" opacity="0.093"/>
<rect x="993.9" y="339.0" width="8.7" height="8.7" fill="#ffffff" opacity="0.059"/>
<rect x="993.9" y="356.2" width="8.7" height="8.7" fill="#000000" opacity="0.014"/>
<rect x="993.9" y="373.4" width="8.7" height="8.7" fill="#ffffff" opacity="0.014"/>
<line x1="461.3" y1="318" x2="708" y2="375.6" stroke="#e01808" stroke-width="1.3"/>
<line x1="461.3" y1="317" x2="708" y2="374.6" stroke="#f58a0c" stroke-width="1.3"/>
<line x1="460" y1="429.8" x2="715" y2="378.6" stroke="#2c0c0c" stroke-width="1.2"/>
<polyline points="626.4,425.3 631.4,425.4 633.9,421.0 638.9,421.2 641.4,416.8 646.5,417.0 649.0,412.6 654.0,412.7 656.5,408.3 661.6,408.5 664.1,404.1 669.1,404.3 671.6,399.9 676.6,400.0 679.1,395.7 684.2,395.8 686.7,391.4 691.7,391.6 694.2,387.2 699.3,387.3 701.7,383.0 706.8,383.1 709.3,378.7 714.3,378.9 716.8,374.5 721.9,374.6 724.4,370.3" fill="none" stroke="#a80e7c" stroke-width="2.6" stroke-linejoin="round" stroke-linecap="round"/>
<circle cx="694.8" cy="421.8" r="114.1" fill="none" stroke="#f4ece0" stroke-width="1.1" stroke-dasharray="3.2 1.6"/>
<line x1="695" y1="422" x2="764" y2="540" stroke="#f8d808" stroke-width="1.5"/>
<line x1="704.6" y1="403" x2="695.8" y2="418.6" stroke="#40204a" stroke-width="0.7"/>
<ellipse cx="701.6" cy="415.6" rx="4.2" ry="1.7" fill="#3a1a10" opacity="0.55" transform="rotate(-20 701.6 415.6)"/>
<path d="M694.7 420.4 C693.6 416.6 690.4 414.4 690.4 410.2 A4.3 4.3 0 0 1 699 410.2 C699 414.4 695.8 416.6 694.7 420.4 Z" fill="#25b02a" stroke="#1a7a1c" stroke-width="0.5"/>
<path d="M696.3 417.9 H701.5 M698.9 415.3 V420.5" stroke="#e01818" stroke-width="0.9"/>
<rect x="702" y="389.8" width="16.6" height="13.2" rx="3.6" fill="#f2d2cc" stroke="#e0b8b4" stroke-width="0.6"/>
<text x="710.4" y="399.6" font-size="7.6" font-weight="bold" fill="#1a1a50" text-anchor="middle">1</text>
<g stroke="#2c92dc" stroke-linecap="round" fill="none"><line x1="707.9" y1="365.7" x2="727.9" y2="388.6" stroke-width="1"/><line x1="725" y1="363.6" x2="710" y2="389.3" stroke-width="1"/><line x1="717" y1="376.6" x2="735.4" y2="380.2" stroke-width="1.5"/><line x1="735.8" y1="377.6" x2="735.2" y2="383.4" stroke-width="1.6"/></g>
<ellipse cx="713.6" cy="375.8" rx="6.4" ry="2.4" fill="#2c92dc" transform="rotate(10 713.6 375.8)"/>
</g>
<rect x="433.6" y="296.3" width="560.6" height="11.2" fill="#050505"/>
<rect x="436.4" y="298.2" width="555" height="7.4" fill="#c2c2c2"/>
<rect x="436.4" y="298.2" width="555" height="1.4" fill="#e0e0e0"/>
<rect x="436.4" y="304.4" width="555" height="1.2" fill="#a8a8a8"/>
<ellipse cx="438.4" cy="302" rx="1.9" ry="3.6" fill="#f0f000"/>
<rect x="990.8" y="298.4" width="3" height="7.2" rx="1" fill="#f0f000"/>
<rect x="400.5" y="294" width="32.6" height="33.4" fill="#29292b"/>
<circle cx="416.6" cy="311.6" r="14.6" fill="none" stroke="#060606" stroke-width="1.3"/>
<circle cx="416.6" cy="311.6" r="7.8" fill="none" stroke="#060606" stroke-width="1.3"/>
<path d="M414.6 313.2 L416.6 310.2 L418.6 313.2" fill="none" stroke="#f01010" stroke-width="0.9"/>
<text x="402.6" y="302.2" font-size="5.4" fill="#f01010">1</text>
<rect x="403.2" y="332" width="29.4" height="12" fill="#a2d04a" stroke="#bce078" stroke-width="0.5"/>
<text x="417.9" y="337.4" font-size="6.3" fill="#4f6a22" text-anchor="middle" textLength="20">Disable</text><text x="417.9" y="343.4" font-size="6.3" fill="#4f6a22" text-anchor="middle" textLength="22.6">Joystick</text>
<rect x="401" y="513.7" width="70.3" height="5.9" fill="#28292b"/><text x="401.8" y="518.4" font-size="6.6" fill="#fff" textLength="24" lengthAdjust="spacingAndGlyphs">hdop: 1.2</text>
<rect x="401" y="523.4" width="22.0" height="6.4" fill="#28292b"/><text x="401.8" y="528.6" font-size="6.6" fill="#fff" textLength="21" lengthAdjust="spacingAndGlyphs">Sats: 10</text>
<rect x="425.4" y="523.4" width="43.2" height="6.4" fill="#28292b"/><text x="426.2" y="528.6" font-size="6.6" fill="#f01818" textLength="41.6" lengthAdjust="spacingAndGlyphs">Current Heading</text>
<rect x="472.8" y="523.4" width="55.2" height="6.4" fill="#28292b"/><text x="473.6" y="528.6" font-size="6.6" fill="#f09010" textLength="53.4" lengthAdjust="spacingAndGlyphs">Direct to current WP</text>
<rect x="531.2" y="523.4" width="41.4" height="6.4" fill="#28292b"/><text x="532.0" y="528.6" font-size="6.6" fill="#0c9a10" textLength="39.6" lengthAdjust="spacingAndGlyphs">Target Heading</text>
<rect x="577.6" y="523.4" width="50.8" height="6.4" fill="#28292b"/><text x="578.4" y="528.6" font-size="6.6" fill="#fff" textLength="49" lengthAdjust="spacingAndGlyphs">GPS Track (Black)</text>
<text x="402.8" y="536.2" font-size="5.7" fill="#1a1a9c" textLength="162.4" lengthAdjust="spacingAndGlyphs">©2017 Google - Map data ©2017 Tele Atlas, Imagery ©2017 TerraMetrics</text>
<rect x="399" y="538.9" width="625" height="1.1" fill="#1c1c1e"/><rect x="399" y="540" width="625" height="1.8" fill="#5a5a5c"/><rect x="399" y="541.8" width="625" height="0.8" fill="#121214"/>
<rect x="1007" y="303" width="3" height="232" fill="#f2f2f2"/>
<rect x="1002.6" y="300.2" width="11.6" height="5.3" fill="#1478e0"/>
<rect x="1000.4" y="302.6" width="1.3" height="1.2" fill="#c8c8c8"/><rect x="1015.4" y="302.6" width="1.3" height="1.2" fill="#c8c8c8"/>
<rect x="1000.4" y="312.2" width="1.3" height="1.2" fill="#c8c8c8"/><rect x="1015.4" y="312.2" width="1.3" height="1.2" fill="#c8c8c8"/>
<rect x="1000.4" y="321.8" width="1.3" height="1.2" fill="#c8c8c8"/><rect x="1015.4" y="321.8" width="1.3" height="1.2" fill="#c8c8c8"/>
<rect x="1000.4" y="331.5" width="1.3" height="1.2" fill="#c8c8c8"/><rect x="1015.4" y="331.5" width="1.3" height="1.2" fill="#c8c8c8"/>
<rect x="1000.4" y="341.1" width="1.3" height="1.2" fill="#c8c8c8"/><rect x="1015.4" y="341.1" width="1.3" height="1.2" fill="#c8c8c8"/>
<rect x="1000.4" y="350.7" width="1.3" height="1.2" fill="#c8c8c8"/><rect x="1015.4" y="350.7" width="1.3" height="1.2" fill="#c8c8c8"/>
<rect x="1000.4" y="360.3" width="1.3" height="1.2" fill="#c8c8c8"/><rect x="1015.4" y="360.3" width="1.3" height="1.2" fill="#c8c8c8"/>
<rect x="1000.4" y="369.9" width="1.3" height="1.2" fill="#c8c8c8"/><rect x="1015.4" y="369.9" width="1.3" height="1.2" fill="#c8c8c8"/>
<rect x="1000.4" y="379.6" width="1.3" height="1.2" fill="#c8c8c8"/><rect x="1015.4" y="379.6" width="1.3" height="1.2" fill="#c8c8c8"/>
<rect x="1000.4" y="389.2" width="1.3" height="1.2" fill="#c8c8c8"/><rect x="1015.4" y="389.2" width="1.3" height="1.2" fill="#c8c8c8"/>
<rect x="1000.4" y="398.8" width="1.3" height="1.2" fill="#c8c8c8"/><rect x="1015.4" y="398.8" width="1.3" height="1.2" fill="#c8c8c8"/>
<rect x="1000.4" y="408.4" width="1.3" height="1.2" fill="#c8c8c8"/><rect x="1015.4" y="408.4" width="1.3" height="1.2" fill="#c8c8c8"/>
<rect x="1000.4" y="418.0" width="1.3" height="1.2" fill="#c8c8c8"/><rect x="1015.4" y="418.0" width="1.3" height="1.2" fill="#c8c8c8"/>
<rect x="1000.4" y="427.7" width="1.3" height="1.2" fill="#c8c8c8"/><rect x="1015.4" y="427.7" width="1.3" height="1.2" fill="#c8c8c8"/>
<rect x="1000.4" y="437.3" width="1.3" height="1.2" fill="#c8c8c8"/><rect x="1015.4" y="437.3" width="1.3" height="1.2" fill="#c8c8c8"/>
<rect x="1000.4" y="446.9" width="1.3" height="1.2" fill="#c8c8c8"/><rect x="1015.4" y="446.9" width="1.3" height="1.2" fill="#c8c8c8"/>
<rect x="1000.4" y="456.5" width="1.3" height="1.2" fill="#c8c8c8"/><rect x="1015.4" y="456.5" width="1.3" height="1.2" fill="#c8c8c8"/>
<rect x="1000.4" y="466.1" width="1.3" height="1.2" fill="#c8c8c8"/><rect x="1015.4" y="466.1" width="1.3" height="1.2" fill="#c8c8c8"/>
<rect x="1000.4" y="475.8" width="1.3" height="1.2" fill="#c8c8c8"/><rect x="1015.4" y="475.8" width="1.3" height="1.2" fill="#c8c8c8"/>
<rect x="1000.4" y="485.4" width="1.3" height="1.2" fill="#c8c8c8"/><rect x="1015.4" y="485.4" width="1.3" height="1.2" fill="#c8c8c8"/>
<rect x="1000.4" y="495.0" width="1.3" height="1.2" fill="#c8c8c8"/><rect x="1015.4" y="495.0" width="1.3" height="1.2" fill="#c8c8c8"/>
<rect x="1000.4" y="504.6" width="1.3" height="1.2" fill="#c8c8c8"/><rect x="1015.4" y="504.6" width="1.3" height="1.2" fill="#c8c8c8"/>
<rect x="1000.4" y="514.2" width="1.3" height="1.2" fill="#c8c8c8"/><rect x="1015.4" y="514.2" width="1.3" height="1.2" fill="#c8c8c8"/>
<rect x="1000.4" y="523.9" width="1.3" height="1.2" fill="#c8c8c8"/><rect x="1015.4" y="523.9" width="1.3" height="1.2" fill="#c8c8c8"/>
<rect x="1000.4" y="533.5" width="1.3" height="1.2" fill="#c8c8c8"/><rect x="1015.4" y="533.5" width="1.3" height="1.2" fill="#c8c8c8"/>
<rect x="402" y="543" width="29.8" height="11.8" fill="#3d3d3f" stroke="#e8e8e8" stroke-width="0.8"/><rect x="422.2" y="543.4" width="9.2" height="11" fill="#f6f6f6"/><path d="M425 548 H428.6 L426.8 550.2 Z" fill="#222"/>
<text x="404" y="551.6" font-size="6.8" fill="#fff" textLength="13.6" lengthAdjust="spacingAndGlyphs">GEO</text>
<text x="434.2" y="551.6" font-size="6.9" fill="#fff" textLength="86.4" lengthAdjust="spacingAndGlyphs" xml:space="preserve">1.352766 103.992657  1521.07m</text>
<rect x="538.1" y="548.9" width="6.3" height="6.3" fill="#f8f8f8" stroke="#ccc" stroke-width="0.4"/><path d="M539.3000000000001 552.1 L540.7 553.6 L543.3000000000001 550.4" fill="none" stroke="#222" stroke-width="0.9"/>
<text x="548" y="554.8" font-size="6.7" fill="#fff" textLength="17.2" lengthAdjust="spacingAndGlyphs">Tuning</text>
<rect x="573" y="548.9" width="6.3" height="6.3" fill="#f8f8f8" stroke="#ccc" stroke-width="0.4"/><path d="M574.2 552.1 L575.6 553.6 L578.2 550.4" fill="none" stroke="#222" stroke-width="0.9"/>
<text x="582.3" y="554.8" font-size="6.7" fill="#fff" textLength="24" lengthAdjust="spacingAndGlyphs">Auto Pan</text>
<text x="614" y="554.8" font-size="6.7" fill="#fff" textLength="14.8" lengthAdjust="spacingAndGlyphs">Zoom</text>
<rect x="632.3" y="546.9" width="40.6" height="11.1" fill="#3d3d3f" stroke="#b8b8b8" stroke-width="0.7"/><rect x="664" y="547.3" width="8.5" height="10.3" fill="#f4f4f4"/><path d="M666.6 551 L668.2 549 L669.8 551 Z M666.6 553.8 L668.2 555.8 L669.8 553.8 Z" fill="#222"/>
<text x="633.4" y="554.8" font-size="6.7" fill="#fff" textLength="11.4" lengthAdjust="spacingAndGlyphs">24.0</text>
</svg>
<!--/MAP-->
</div>
<div id="winb" class="abs" style="left:0;top:558.7px;width:1024px;height:1.3px;background:#858585"></div>
<div class="abs" style="left:1022.8px;top:294px;width:1.2px;height:266px;background:#7a7a7a"></div>
</body>
</html>
